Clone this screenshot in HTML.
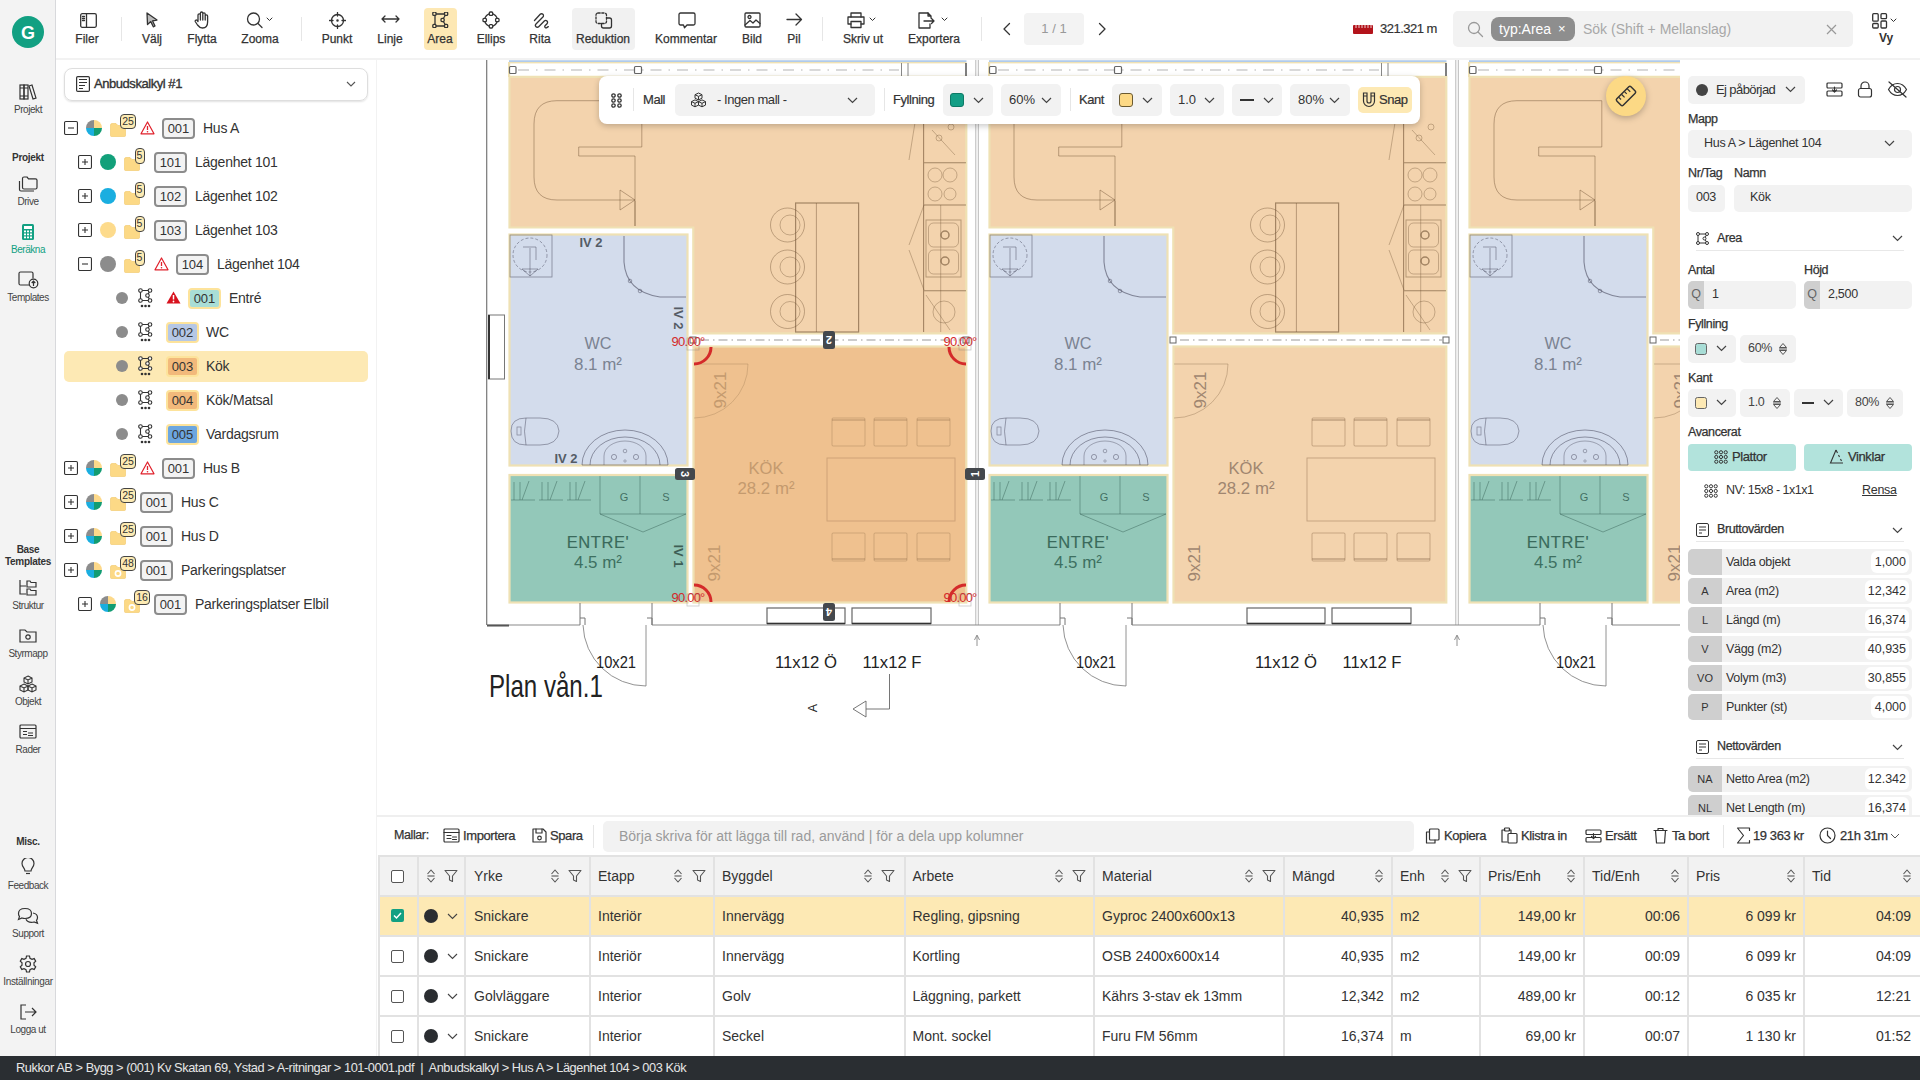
<!DOCTYPE html>
<html><head><meta charset="utf-8">
<style>
*{box-sizing:border-box;margin:0;padding:0}
html,body{width:1920px;height:1080px;overflow:hidden;background:#fff;font-family:"Liberation Sans",sans-serif;color:#333}
.abs{position:absolute}
#side{position:absolute;left:0;top:0;width:56px;height:1056px;background:#f3f3f3;border-right:1px solid #d8d9dc}
#top{position:absolute;left:56px;top:0;width:1864px;height:60px;background:#fff;border-bottom:2px solid #f2f2f2}
#left{position:absolute;left:56px;top:60px;width:322px;height:996px;background:#fff;border-right:2px solid #f2f2f2}
#canvas{position:absolute;left:377px;top:60px;width:1303px;height:755px;background:#fff;overflow:hidden}
#right{position:absolute;left:1680px;top:60px;width:240px;height:755px;background:#fff;overflow:hidden}
#bottom{position:absolute;left:377px;top:815px;width:1543px;height:241px;background:#fff;box-shadow:inset 0 2px 0 #efefef}
#status{position:absolute;left:0;top:1056px;width:1920px;height:24px;background:#2a2e32;color:#e6e6e6;font-size:12.8px;line-height:24px;padding-left:16px;white-space:nowrap;letter-spacing:-0.45px}
.sl{position:absolute;width:56px;text-align:center;font-size:10px;color:#444;letter-spacing:-0.45px}
.sh{position:absolute;width:56px;text-align:center;font-size:10px;font-weight:bold;color:#333;letter-spacing:-0.3px}
.tl{position:absolute;top:32px;font-size:12px;color:#333;text-align:center;white-space:nowrap;-webkit-text-stroke:0.25px #333}
.ti{position:absolute}
</style></head><body>
<div id="side">
<svg class="abs" style="left:12px;top:16px" width="32" height="32"><circle cx="16" cy="16" r="16" fill="#12a082"/><text x="16" y="22.5" text-anchor="middle" font-family="Liberation Sans" font-weight="bold" font-size="18" fill="#fff">G</text></svg>
<svg class="abs" style="left:19px;top:83px" width="18" height="17" fill="none" stroke="#333" stroke-width="1.2"><rect x="1" y="2" width="4" height="14"/><rect x="5" y="2" width="4" height="14"/><path d="M10 3 L13 2 L17 15 L14 16 Z"/><path d="M1 5h8M1 13h8"/></svg>
<div class="sl" style="left:0;top:104px">Projekt</div>
<div class="sh" style="left:0;top:152px">Projekt</div>
<svg class="abs" style="left:18px;top:176px" width="20" height="16" fill="none" stroke="#333" stroke-width="1.2" stroke-linejoin="round"><path d="M4.5 2.5 Q4.5 1 6 1 H9 L10.5 2.8 H17.5 Q19 2.8 19 4.3 V11.5 Q19 13 17.5 13 H6 Q4.5 13 4.5 11.5 Z"/><path d="M1.5 5 V13.5 Q1.5 15 3 15 H16"/></svg>
<div class="sl" style="left:0;top:196px">Drive</div>
<svg class="abs" style="left:22px;top:224px" width="12" height="16"><rect x="0" y="0" width="12" height="16" rx="1.5" fill="#12a082"/><rect x="2" y="2" width="8" height="3" fill="#fff"/><g fill="#fff"><rect x="2" y="6.5" width="2" height="1.8"/><rect x="5" y="6.5" width="2" height="1.8"/><rect x="8" y="6.5" width="2" height="1.8"/><rect x="2" y="9.5" width="2" height="1.8"/><rect x="5" y="9.5" width="2" height="1.8"/><rect x="8" y="9.5" width="2" height="1.8"/><rect x="2" y="12.5" width="2" height="1.8"/><rect x="5" y="12.5" width="2" height="1.8"/><rect x="8" y="12.5" width="2" height="1.8"/></g></svg>
<div class="sl" style="left:0;top:244px;color:#12a082">Beräkna</div>
<svg class="abs" style="left:18px;top:271px" width="21" height="18" fill="none" stroke="#333" stroke-width="1.2"><path d="M11 14 H2.5 Q1 14 1 12.5 V2.5 Q1 1 2.5 1 H13.5 Q15 1 15 2.5 V7.5"/><circle cx="15.5" cy="12.5" r="4.3"/><path d="M15.5 15 V10.3 M13.7 12 L15.5 10.2 L17.3 12"/></svg>
<div class="sl" style="left:0;top:292px">Templates</div>
<div class="sh" style="left:0;top:544px;line-height:12px">Base<br>Templates</div>
<svg class="abs" style="left:19px;top:579px" width="18" height="17" fill="none" stroke="#333" stroke-width="1.2"><path d="M1 1 V15 H7 M1 7 H7"/><path d="M8 2 H11 L12 3.5 H17 V8 H8 Z"/><path d="M8 10 H11 L12 11.5 H17 V16 H8 Z"/></svg>
<div class="sl" style="left:0;top:600px">Struktur</div>
<svg class="abs" style="left:19px;top:628px" width="18" height="15" fill="none" stroke="#333" stroke-width="1.2"><path d="M1 2 H6 L8 4 H17 V14 H1 Z"/><circle cx="9" cy="9" r="2.2"/></svg>
<div class="sl" style="left:0;top:648px">Styrmapp</div>
<svg class="abs" style="left:18px;top:675px" width="20" height="18" fill="none" stroke="#333" stroke-width="1.1"><path d="M10 1 L14 3 V7 L10 9 L6 7 V3 Z M6 3 L10 5 L14 3 M10 5 V9"/><path d="M6 9 L10 11 V15 L6 17 L2 15 V11 Z M2 11 L6 13 L10 11 M6 13 V17"/><path d="M14 9 L18 11 V15 L14 17 L10 15 V11 Z M10 11 L14 13 L18 11 M14 13 V17"/></svg>
<div class="sl" style="left:0;top:696px">Objekt</div>
<svg class="abs" style="left:19px;top:724px" width="18" height="15" fill="none" stroke="#333" stroke-width="1.2"><rect x="1" y="1" width="16" height="13" rx="1"/><path d="M1 4.5 H17 M4 7.5 H8 M4 10.5 H8 M9 9 H14 M9 11.5 H14"/></svg>
<div class="sl" style="left:0;top:744px">Rader</div>
<div class="sh" style="left:0;top:836px">Misc.</div>
<svg class="abs" style="left:21px;top:858px" width="14" height="18" fill="none" stroke="#333" stroke-width="1.2"><path d="M4 13 C4 10 1 9 1 5.5 A6 6 0 0 1 13 5.5 C13 9 10 10 10 13 Z"/><path d="M5 15.5 H9"/></svg>
<div class="sl" style="left:0;top:880px">Feedback</div>
<svg class="abs" style="left:17px;top:907px" width="22" height="18" fill="none" stroke="#333" stroke-width="1.2"><path d="M8 1.5 C12 1.5 14.5 3.5 14.5 6.5 C14.5 9.5 12 11.5 8 11.5 C7 11.5 6 11.3 5 11 L1.5 12.5 L2.5 9.5 C1.8 8.7 1.5 7.6 1.5 6.5 C1.5 3.5 4 1.5 8 1.5 Z"/><path d="M16 6 C19 6.5 20.5 8.2 20.5 10.5 C20.5 11.6 20.2 12.5 19.5 13.3 L20.5 16.3 L17 15 C16.2 15.3 15.4 15.4 14.5 15.4 C11.8 15.4 9.8 14.2 9 12.3"/></svg>
<div class="sl" style="left:0;top:928px">Support</div>
<svg class="abs" style="left:19px;top:955px" width="18" height="18" fill="none" stroke="#333" stroke-width="1.2"><circle cx="9" cy="9" r="2.5"/><path d="M7.5 1 H10.5 L11 3.3 L13 4.4 L15.2 3.6 L16.7 6.2 L15 7.8 V10.2 L16.7 11.8 L15.2 14.4 L13 13.6 L11 14.7 L10.5 17 H7.5 L7 14.7 L5 13.6 L2.8 14.4 L1.3 11.8 L3 10.2 V7.8 L1.3 6.2 L2.8 3.6 L5 4.4 L7 3.3 Z"/></svg>
<div class="sl" style="left:-2px;width:60px;top:976px;font-size:10px;letter-spacing:-0.35px">Inställningar</div>
<svg class="abs" style="left:19px;top:1004px" width="18" height="16" fill="none" stroke="#333" stroke-width="1.2"><path d="M7 1 H2 V15 H7"/><path d="M6 8 H17 M13 4 L17 8 L13 12"/></svg>
<div class="sl" style="left:0;top:1024px">Logga ut</div>
</div>
<div id="top"><svg class="ti" style="left:24px;top:13px" width="17" height="15" fill="none" stroke="#333" stroke-width="1.3" stroke-linecap="round" stroke-linejoin="round"><rect x="0.7" y="0.7" width="15.6" height="13.6" rx="1.5"/><path d="M6.5 0.7 V14.3 M2.5 3.5 H4.5 M2.5 5.5 H4.5 M2.5 7.5 H4.5"/></svg>
<div class="tl" style="left:-19px;width:100px;">Filer</div>
<div class="abs" style="left:65px;top:17px;width:1px;height:24px;background:#e6e6e6"></div>
<svg class="ti" style="left:90px;top:12px" width="13" height="16" fill="none" stroke="#333" stroke-width="1.3" stroke-linecap="round" stroke-linejoin="round"><path d="M1 1 L11 8 L6.5 8.8 L9 14 L7.3 14.8 L4.8 9.6 L1.5 12.5 Z" fill="#bbb" stroke="#333"/></svg>
<div class="tl" style="left:46px;width:100px;">Välj</div>
<svg class="ti" style="left:138px;top:11px" width="17" height="18" fill="none" stroke="#333" stroke-width="1.3" stroke-linecap="round" stroke-linejoin="round"><path d="M4 10 V4 A1.2 1.2 0 0 1 6.4 4 V9 M6.4 9 V2.2 A1.2 1.2 0 0 1 8.8 2.2 V9 M8.8 9 V3 A1.2 1.2 0 0 1 11.2 3 V9 M11.2 9 V5 A1.2 1.2 0 0 1 13.6 5 V11 C13.6 15 11.5 17 8.5 17 C6 17 5 16 3.5 14 L1.2 10.5 A1.2 1.2 0 0 1 3 9.2 L4 10.5"/></svg>
<div class="tl" style="left:96px;width:100px;">Flytta</div>
<svg class="ti" style="left:190px;top:12px" width="32" height="17" fill="none" stroke="#333" stroke-width="1.3" stroke-linecap="round" stroke-linejoin="round"><circle cx="7.5" cy="7" r="6"/><path d="M12 11.5 L16 15.5"/><path d="M21 6 L23.5 8.5 L26 6" stroke-width="1"/></svg>
<div class="tl" style="left:154px;width:100px;">Zooma</div>
<div class="abs" style="left:245px;top:17px;width:1px;height:24px;background:#e6e6e6"></div>
<svg class="ti" style="left:273px;top:12px" width="17" height="17" fill="none" stroke="#333" stroke-width="1.3" stroke-linecap="round" stroke-linejoin="round"><circle cx="8.5" cy="8.5" r="6"/><path d="M8.5 0.5 V4 M8.5 13 V16.5 M0.5 8.5 H4 M13 8.5 H16.5"/><circle cx="8.5" cy="8.5" r="0.6" fill="#333"/></svg>
<div class="tl" style="left:231px;width:100px;">Punkt</div>
<svg class="ti" style="left:325px;top:14px" width="19" height="10" fill="none" stroke="#333" stroke-width="1.3" stroke-linecap="round" stroke-linejoin="round"><path d="M1 5 H18 M4 2 L1 5 L4 8 M15 2 L18 5 L15 8"/></svg>
<div class="tl" style="left:284px;width:100px;">Linje</div>
<div class="abs" style="left:368px;top:8px;width:33px;height:42px;background:#fde8b4;border-radius:4px"></div>
<svg class="ti" style="left:376px;top:12px" width="17" height="16" fill="none" stroke="#333" stroke-width="1.3" stroke-linecap="round" stroke-linejoin="round"><path d="M3 2 H14 L10.5 8 L14 14 H3 Z" /><rect x="0.8" y="0.2" width="3.2" height="3.2" rx="1" fill="#fde8b4"/><rect x="12.5" y="0.2" width="3.2" height="3.2" rx="1" fill="#fde8b4"/><rect x="0.8" y="12.4" width="3.2" height="3.2" rx="1" fill="#fde8b4"/><rect x="12.5" y="12.4" width="3.2" height="3.2" rx="1" fill="#fde8b4"/><rect x="9" y="6.4" width="3.2" height="3.2" rx="1" fill="#fde8b4"/></svg>
<div class="tl" style="left:334px;width:100px;">Area</div>
<svg class="ti" style="left:426px;top:11px" width="18" height="18" fill="none" stroke="#333" stroke-width="1.3" stroke-linecap="round" stroke-linejoin="round"><circle cx="9" cy="9" r="6.3"/><rect x="7.3" y="1" width="3.4" height="3.4" rx="1" fill="#fff"/><rect x="7.3" y="13.6" width="3.4" height="3.4" rx="1" fill="#fff"/><rect x="1" y="7.3" width="3.4" height="3.4" rx="1" fill="#fff"/><rect x="13.6" y="7.3" width="3.4" height="3.4" rx="1" fill="#fff"/></svg>
<div class="tl" style="left:385px;width:100px;">Ellips</div>
<svg class="ti" style="left:477px;top:12px" width="17" height="17" fill="none" stroke="#333" stroke-width="1.3" stroke-linecap="round" stroke-linejoin="round"><path d="M1.5 8.5 L7.2 2.3 A1.9 1.9 0 0 1 9.9 5 L3 12 A1.9 1.9 0 0 0 5.7 14.7 L11.3 9 A1.9 1.9 0 0 1 14 11.7 L12 13.8 A1.3 1.3 0 0 0 13.8 15.6 L15.3 14.6"/></svg>
<div class="tl" style="left:434px;width:100px;">Rita</div>
<div class="abs" style="left:516px;top:8px;width:63px;height:42px;background:#f1f1f1;border-radius:4px"></div>
<svg class="ti" style="left:539px;top:12px" width="18" height="17" fill="none" stroke="#333" stroke-width="1.3" stroke-linecap="round" stroke-linejoin="round"><rect x="1" y="1" width="10.5" height="10.5" rx="2" stroke-dasharray="2.2 1.6"/><path d="M11.5 6 H14.5 A2 2 0 0 1 16.5 8 V14 A2 2 0 0 1 14.5 16 H8.5 A2 2 0 0 1 6.5 14 V11.5"/></svg>
<div class="tl" style="left:497px;width:100px;">Reduktion</div>
<svg class="ti" style="left:622px;top:12px" width="18" height="17" fill="none" stroke="#333" stroke-width="1.3" stroke-linecap="round" stroke-linejoin="round"><path d="M2.5 1 H15.5 A1.5 1.5 0 0 1 17 2.5 V11.5 A1.5 1.5 0 0 1 15.5 13 H9 L6.5 15.8 L5.5 13 H2.5 A1.5 1.5 0 0 1 1 11.5 V2.5 A1.5 1.5 0 0 1 2.5 1 Z"/></svg>
<div class="tl" style="left:580px;width:100px;">Kommentar</div>
<svg class="ti" style="left:688px;top:12px" width="17" height="16" fill="none" stroke="#333" stroke-width="1.3" stroke-linecap="round" stroke-linejoin="round"><rect x="1" y="1" width="15" height="14" rx="1"/><circle cx="5.5" cy="5" r="1.5"/><path d="M1 13 L6 8.5 L9 11 L12 8 L16 11.5"/></svg>
<div class="tl" style="left:646px;width:100px;">Bild</div>
<svg class="ti" style="left:730px;top:13px" width="17" height="13" fill="none" stroke="#333" stroke-width="1.3" stroke-linecap="round" stroke-linejoin="round"><path d="M1 6.5 H15.5 M10 1 L15.5 6.5 L10 12"/></svg>
<div class="tl" style="left:688px;width:100px;">Pil</div>
<div class="abs" style="left:766px;top:17px;width:1px;height:24px;background:#e6e6e6"></div>
<svg class="ti" style="left:791px;top:12px" width="32" height="17" fill="none" stroke="#333" stroke-width="1.3" stroke-linecap="round" stroke-linejoin="round"><path d="M4 5 V1 H14 V5"/><path d="M4 12 H1 V5 H17 V12 H14"/><rect x="4" y="9.5" width="10" height="6"/><path d="M23 6 L25.5 8.5 L28 6" stroke-width="1"/></svg>
<div class="tl" style="left:757px;width:100px;">Skriv ut</div>
<svg class="ti" style="left:861px;top:12px" width="34" height="17" fill="none" stroke="#333" stroke-width="1.3" stroke-linecap="round" stroke-linejoin="round"><path d="M11 1 H2 V16 H13 V12"/><path d="M11 1 L14 4 M11 1 V4 H14 V6"/><path d="M7 9 H17 M14.5 6.5 L17 9 L14.5 11.5"/><path d="M25 6 L27.5 8.5 L30 6" stroke-width="1"/></svg>
<div class="tl" style="left:828px;width:100px;">Exportera</div>
<div class="abs" style="left:925px;top:17px;width:1px;height:24px;background:#e6e6e6"></div>
<svg class="ti" style="left:946px;top:22px" width="10" height="14" fill="none" stroke="#333" stroke-width="1.3" stroke-linecap="round" stroke-linejoin="round"><path d="M7.5 1.5 L2 7 L7.5 12.5"/></svg>
<div class="abs" style="left:968px;top:13px;width:60px;height:32px;background:#f3f3f3;border-radius:4px;color:#999;font-size:13px;line-height:32px;text-align:center">1 / 1</div>
<svg class="ti" style="left:1041px;top:22px" width="10" height="14" fill="none" stroke="#333" stroke-width="1.3" stroke-linecap="round" stroke-linejoin="round"><path d="M2.5 1.5 L8 7 L2.5 12.5"/></svg>
<svg class="ti" style="left:1297px;top:25px" width="20" height="10"><rect x="0" y="0" width="20" height="9" rx="1" fill="#b3131b"/><path d="M3 0 V3 M6 0 V3 M9 0 V3 M12 0 V3 M15 0 V3 M18 0 V3" stroke="#fff" stroke-width="0.8"/></svg>
<div class="abs" style="left:1324px;top:21px;font-size:13px;color:#333;white-space:nowrap;-webkit-text-stroke:0.2px #333;letter-spacing:-0.5px">321.321 m</div>
<div class="abs" style="left:1397px;top:11px;width:400px;height:36px;background:#f2f2f2;border-radius:5px"></div>
<svg class="ti" style="left:1411px;top:21px" width="17" height="17" fill="none" stroke="#999" stroke-width="1.3" stroke-linecap="round"><circle cx="7" cy="7" r="5.5"/><path d="M11 11 L15.5 15.5"/></svg>
<div class="abs" style="left:1435px;top:17px;width:84px;height:24px;background:#8e8e8e;border-radius:8px;color:#fff;font-size:14px;line-height:24px;padding-left:8px;white-space:nowrap">typ:Area<span style="position:absolute;left:67px;top:0;font-size:13px">×</span></div>
<div class="abs" style="left:1527px;top:21px;font-size:14px;color:#a8a8a8;white-space:nowrap">Sök (Shift + Mellanslag)</div>
<svg class="ti" style="left:1770px;top:24px" width="11" height="11" fill="none" stroke="#999" stroke-width="1.2"><path d="M1 1 L10 10 M10 1 L1 10"/></svg>
<svg class="ti" style="left:1816px;top:13px" width="28" height="16" fill="none" stroke="#333" stroke-width="1.3" stroke-linecap="round" stroke-linejoin="round"><rect x="0.7" y="0.7" width="5.5" height="7.5" rx="1"/><rect x="9" y="0.7" width="5.5" height="5" rx="1"/><rect x="0.7" y="10.5" width="5.5" height="4.5" rx="1"/><rect x="9" y="8" width="5.5" height="7" rx="1"/><path d="M19 6 L21.5 8.5 L24 6" stroke-width="1"/></svg>
<div class="abs" style="left:1810px;top:31px;width:40px;text-align:center;font-size:12px;font-weight:bold;color:#333">Vy</div></div>
<div id="left"><div class="abs" style="left:8px;top:8px;width:304px;height:33px;border:1px solid #dedede;border-radius:8px;box-shadow:0 1px 2px rgba(0,0,0,0.12)"></div>
<svg class="abs" style="left:20px;top:16px" width="14" height="16" fill="none" stroke="#333" stroke-width="1.2"><rect x="0.6" y="0.6" width="12.8" height="14.8" rx="1.2"/><path d="M3 3.5 H11 M3 6.5 H11 M3 9.5 H9 M3 12.5 H7"/></svg>
<div class="abs" style="left:38px;top:16px;font-size:13px;color:#333;white-space:nowrap;-webkit-text-stroke:0.35px #333;letter-spacing:-0.45px">Anbudskalkyl #1</div>
<svg class="abs" style="left:290px;top:21px" width="10" height="6" fill="none" stroke="#555" stroke-width="1.1"><path d="M1 1 L5 5 L9 1"/></svg>
<div class="abs" style="left:8px;top:291px;width:304px;height:31px;background:#fde9b4;border-radius:5px"></div>
<svg class="abs" style="left:8px;top:61px" width="14" height="14" fill="none" stroke="#333" stroke-width="1.1"><rect x="0.55" y="0.55" width="12.9" height="12.9" rx="1.2"/><path d="M4 7 H10"/></svg>
<svg class="abs" style="left:30px;top:60px" width="16" height="16"><path d="M8 8 V0 A8 8 0 0 0 0 8 Z" fill="#8c8c8c"/><path d="M8 8 H16 A8 8 0 0 0 8 0 Z" fill="#fdd98a"/><path d="M8 8 H0 A8 8 0 0 0 8 16 Z" fill="#1aaee0"/><path d="M8 8 V16 A8 8 0 0 0 16 8 Z" fill="#129c72"/></svg>
<svg class="abs" style="left:54px;top:63px" width="16" height="14"><path d="M0.5 2 Q0.5 0.5 2 0.5 H6 L8 2.5 H14 Q15.5 2.5 15.5 4 V12.5 Q15.5 13.5 14.5 13.5 H1.5 Q0.5 13.5 0.5 12.5 Z" fill="#fcd986" stroke="#f2c866" stroke-width="0.6"/></svg><div class="abs" style="left:64px;top:54px;width:16px;height:15px;background:#fdebb3;border:1px solid #444;border-radius:4px;font-size:10.5px;line-height:13px;text-align:center;color:#333">25</div>
<svg class="abs" style="left:84px;top:61px" width="15" height="14"><path d="M7.5 1 L14 12.8 H1 Z" fill="none" stroke="#e0202b" stroke-width="1.2" stroke-linejoin="round"/><path d="M7.5 5 V9" stroke="#e0202b" stroke-width="1.3"/><circle cx="7.5" cy="10.8" r="0.8" fill="#e0202b"/></svg>
<div class="abs" style="left:106px;top:58px;width:33px;height:21px;background:#f3f3f3;border:2px solid #8c8c8c;border-radius:4px;font-size:13px;line-height:17px;text-align:center;color:#333">001</div>
<div class="abs" style="left:147px;top:59px;font-size:14px;line-height:18px;color:#333;white-space:nowrap;letter-spacing:-0.25px">Hus A</div>
<svg class="abs" style="left:22px;top:95px" width="14" height="14" fill="none" stroke="#333" stroke-width="1.1"><rect x="0.55" y="0.55" width="12.9" height="12.9" rx="1.2"/><path d="M4 7 H10 M7 4 V10"/></svg>
<svg class="abs" style="left:44px;top:94px" width="16" height="16"><circle cx="8" cy="8" r="8" fill="#12a07a"/></svg>
<svg class="abs" style="left:68px;top:97px" width="16" height="14"><path d="M0.5 2 Q0.5 0.5 2 0.5 H6 L8 2.5 H14 Q15.5 2.5 15.5 4 V12.5 Q15.5 13.5 14.5 13.5 H1.5 Q0.5 13.5 0.5 12.5 Z" fill="#fcd986" stroke="#f2c866" stroke-width="0.6"/></svg><div class="abs" style="left:78.5px;top:88px;width:10px;height:16px;background:#fdebb3;border:1px solid #444;border-radius:4px;font-size:10.5px;line-height:13px;text-align:center;color:#333">5</div>
<div class="abs" style="left:98px;top:92px;width:33px;height:21px;background:#f3f3f3;border:2px solid #8c8c8c;border-radius:4px;font-size:13px;line-height:17px;text-align:center;color:#333">101</div>
<div class="abs" style="left:139px;top:93px;font-size:14px;line-height:18px;color:#333;white-space:nowrap;letter-spacing:-0.25px">Lägenhet 101</div>
<svg class="abs" style="left:22px;top:129px" width="14" height="14" fill="none" stroke="#333" stroke-width="1.1"><rect x="0.55" y="0.55" width="12.9" height="12.9" rx="1.2"/><path d="M4 7 H10 M7 4 V10"/></svg>
<svg class="abs" style="left:44px;top:128px" width="16" height="16"><circle cx="8" cy="8" r="8" fill="#1aaee0"/></svg>
<svg class="abs" style="left:68px;top:131px" width="16" height="14"><path d="M0.5 2 Q0.5 0.5 2 0.5 H6 L8 2.5 H14 Q15.5 2.5 15.5 4 V12.5 Q15.5 13.5 14.5 13.5 H1.5 Q0.5 13.5 0.5 12.5 Z" fill="#fcd986" stroke="#f2c866" stroke-width="0.6"/></svg><div class="abs" style="left:78.5px;top:122px;width:10px;height:16px;background:#fdebb3;border:1px solid #444;border-radius:4px;font-size:10.5px;line-height:13px;text-align:center;color:#333">5</div>
<div class="abs" style="left:98px;top:126px;width:33px;height:21px;background:#f3f3f3;border:2px solid #8c8c8c;border-radius:4px;font-size:13px;line-height:17px;text-align:center;color:#333">102</div>
<div class="abs" style="left:139px;top:127px;font-size:14px;line-height:18px;color:#333;white-space:nowrap;letter-spacing:-0.25px">Lägenhet 102</div>
<svg class="abs" style="left:22px;top:163px" width="14" height="14" fill="none" stroke="#333" stroke-width="1.1"><rect x="0.55" y="0.55" width="12.9" height="12.9" rx="1.2"/><path d="M4 7 H10 M7 4 V10"/></svg>
<svg class="abs" style="left:44px;top:162px" width="16" height="16"><circle cx="8" cy="8" r="8" fill="#fddb8c"/></svg>
<svg class="abs" style="left:68px;top:165px" width="16" height="14"><path d="M0.5 2 Q0.5 0.5 2 0.5 H6 L8 2.5 H14 Q15.5 2.5 15.5 4 V12.5 Q15.5 13.5 14.5 13.5 H1.5 Q0.5 13.5 0.5 12.5 Z" fill="#fcd986" stroke="#f2c866" stroke-width="0.6"/></svg><div class="abs" style="left:78.5px;top:156px;width:10px;height:16px;background:#fdebb3;border:1px solid #444;border-radius:4px;font-size:10.5px;line-height:13px;text-align:center;color:#333">5</div>
<div class="abs" style="left:98px;top:160px;width:33px;height:21px;background:#f3f3f3;border:2px solid #8c8c8c;border-radius:4px;font-size:13px;line-height:17px;text-align:center;color:#333">103</div>
<div class="abs" style="left:139px;top:161px;font-size:14px;line-height:18px;color:#333;white-space:nowrap;letter-spacing:-0.25px">Lägenhet 103</div>
<svg class="abs" style="left:22px;top:197px" width="14" height="14" fill="none" stroke="#333" stroke-width="1.1"><rect x="0.55" y="0.55" width="12.9" height="12.9" rx="1.2"/><path d="M4 7 H10"/></svg>
<svg class="abs" style="left:44px;top:196px" width="16" height="16"><circle cx="8" cy="8" r="8" fill="#8c8c8c"/></svg>
<svg class="abs" style="left:68px;top:199px" width="16" height="14"><path d="M0.5 2 Q0.5 0.5 2 0.5 H6 L8 2.5 H14 Q15.5 2.5 15.5 4 V12.5 Q15.5 13.5 14.5 13.5 H1.5 Q0.5 13.5 0.5 12.5 Z" fill="#fcd986" stroke="#f2c866" stroke-width="0.6"/></svg><div class="abs" style="left:78.5px;top:190px;width:10px;height:16px;background:#fdebb3;border:1px solid #444;border-radius:4px;font-size:10.5px;line-height:13px;text-align:center;color:#333">5</div>
<svg class="abs" style="left:98px;top:197px" width="15" height="14"><path d="M7.5 1 L14 12.8 H1 Z" fill="none" stroke="#e0202b" stroke-width="1.2" stroke-linejoin="round"/><path d="M7.5 5 V9" stroke="#e0202b" stroke-width="1.3"/><circle cx="7.5" cy="10.8" r="0.8" fill="#e0202b"/></svg>
<div class="abs" style="left:120px;top:194px;width:33px;height:21px;background:#f3f3f3;border:2px solid #8c8c8c;border-radius:4px;font-size:13px;line-height:17px;text-align:center;color:#333">104</div>
<div class="abs" style="left:161px;top:195px;font-size:14px;line-height:18px;color:#333;white-space:nowrap;letter-spacing:-0.25px">Lägenhet 104</div>
<svg class="abs" style="left:60px;top:232px" width="12" height="12"><circle cx="6" cy="6" r="6" fill="#8c8c8c"/></svg>
<svg class="abs" style="left:82px;top:228px" width="15" height="20" fill="none" stroke="#333" stroke-width="1.1"><path d="M2.5 2.5 H12 L9.5 7.5 L12 12.5 H2.5 Z"/><circle cx="2.5" cy="2.5" r="1.8" fill="#fff"/><circle cx="12" cy="2.5" r="1.8" fill="#fff"/><circle cx="9.5" cy="7.5" r="1.8" fill="#fff"/><circle cx="2.5" cy="12.5" r="1.8" fill="#fff"/><circle cx="12" cy="12.5" r="1.8" fill="#fff"/><g fill="#333" stroke="none"><circle cx="4" cy="18" r="1.3"/><circle cx="7.5" cy="18" r="1.3"/><circle cx="11" cy="18" r="1.3"/></g></svg>
<svg class="abs" style="left:110px;top:231px" width="15" height="13"><path d="M7.5 0.5 L14.5 12.5 H0.5 Z" fill="#d8121e"/><path d="M7.5 4 V8.5" stroke="#fff" stroke-width="1.5"/><circle cx="7.5" cy="10.5" r="0.9" fill="#fff"/></svg>
<div class="abs" style="left:132px;top:228px;width:33px;height:21px;background:#a9ded6;border:2px solid #fde39b;border-radius:4px;font-size:13px;line-height:17px;text-align:center;color:#333">001</div>
<div class="abs" style="left:173px;top:229px;font-size:14px;line-height:18px;color:#333;white-space:nowrap;letter-spacing:-0.25px">Entré</div>
<svg class="abs" style="left:60px;top:266px" width="12" height="12"><circle cx="6" cy="6" r="6" fill="#8c8c8c"/></svg>
<svg class="abs" style="left:82px;top:262px" width="15" height="20" fill="none" stroke="#333" stroke-width="1.1"><path d="M2.5 2.5 H12 L9.5 7.5 L12 12.5 H2.5 Z"/><circle cx="2.5" cy="2.5" r="1.8" fill="#fff"/><circle cx="12" cy="2.5" r="1.8" fill="#fff"/><circle cx="9.5" cy="7.5" r="1.8" fill="#fff"/><circle cx="2.5" cy="12.5" r="1.8" fill="#fff"/><circle cx="12" cy="12.5" r="1.8" fill="#fff"/><g fill="#333" stroke="none"><circle cx="4" cy="18" r="1.3"/><circle cx="7.5" cy="18" r="1.3"/><circle cx="11" cy="18" r="1.3"/></g></svg>
<div class="abs" style="left:110px;top:262px;width:33px;height:21px;background:#b5c7e5;border:2px solid #fde39b;border-radius:4px;font-size:13px;line-height:17px;text-align:center;color:#333">002</div>
<div class="abs" style="left:150px;top:263px;font-size:14px;line-height:18px;color:#333;white-space:nowrap;letter-spacing:-0.25px">WC</div>
<svg class="abs" style="left:60px;top:300px" width="12" height="12"><circle cx="6" cy="6" r="6" fill="#8c8c8c"/></svg>
<svg class="abs" style="left:82px;top:296px" width="15" height="20" fill="none" stroke="#333" stroke-width="1.1"><path d="M2.5 2.5 H12 L9.5 7.5 L12 12.5 H2.5 Z"/><circle cx="2.5" cy="2.5" r="1.8" fill="#fff"/><circle cx="12" cy="2.5" r="1.8" fill="#fff"/><circle cx="9.5" cy="7.5" r="1.8" fill="#fff"/><circle cx="2.5" cy="12.5" r="1.8" fill="#fff"/><circle cx="12" cy="12.5" r="1.8" fill="#fff"/><g fill="#333" stroke="none"><circle cx="4" cy="18" r="1.3"/><circle cx="7.5" cy="18" r="1.3"/><circle cx="11" cy="18" r="1.3"/></g></svg>
<div class="abs" style="left:110px;top:296px;width:33px;height:21px;background:#f2b97b;border:2px solid #fde39b;border-radius:4px;font-size:13px;line-height:17px;text-align:center;color:#333">003</div>
<div class="abs" style="left:150px;top:297px;font-size:14px;line-height:18px;color:#333;white-space:nowrap;letter-spacing:-0.25px">Kök</div>
<svg class="abs" style="left:60px;top:334px" width="12" height="12"><circle cx="6" cy="6" r="6" fill="#8c8c8c"/></svg>
<svg class="abs" style="left:82px;top:330px" width="15" height="20" fill="none" stroke="#333" stroke-width="1.1"><path d="M2.5 2.5 H12 L9.5 7.5 L12 12.5 H2.5 Z"/><circle cx="2.5" cy="2.5" r="1.8" fill="#fff"/><circle cx="12" cy="2.5" r="1.8" fill="#fff"/><circle cx="9.5" cy="7.5" r="1.8" fill="#fff"/><circle cx="2.5" cy="12.5" r="1.8" fill="#fff"/><circle cx="12" cy="12.5" r="1.8" fill="#fff"/><g fill="#333" stroke="none"><circle cx="4" cy="18" r="1.3"/><circle cx="7.5" cy="18" r="1.3"/><circle cx="11" cy="18" r="1.3"/></g></svg>
<div class="abs" style="left:110px;top:330px;width:33px;height:21px;background:#f2b97b;border:2px solid #fde39b;border-radius:4px;font-size:13px;line-height:17px;text-align:center;color:#333">004</div>
<div class="abs" style="left:150px;top:331px;font-size:14px;line-height:18px;color:#333;white-space:nowrap;letter-spacing:-0.25px">Kök/Matsal</div>
<svg class="abs" style="left:60px;top:368px" width="12" height="12"><circle cx="6" cy="6" r="6" fill="#8c8c8c"/></svg>
<svg class="abs" style="left:82px;top:364px" width="15" height="20" fill="none" stroke="#333" stroke-width="1.1"><path d="M2.5 2.5 H12 L9.5 7.5 L12 12.5 H2.5 Z"/><circle cx="2.5" cy="2.5" r="1.8" fill="#fff"/><circle cx="12" cy="2.5" r="1.8" fill="#fff"/><circle cx="9.5" cy="7.5" r="1.8" fill="#fff"/><circle cx="2.5" cy="12.5" r="1.8" fill="#fff"/><circle cx="12" cy="12.5" r="1.8" fill="#fff"/><g fill="#333" stroke="none"><circle cx="4" cy="18" r="1.3"/><circle cx="7.5" cy="18" r="1.3"/><circle cx="11" cy="18" r="1.3"/></g></svg>
<div class="abs" style="left:110px;top:364px;width:33px;height:21px;background:#6ca6df;border:2px solid #fde39b;border-radius:4px;font-size:13px;line-height:17px;text-align:center;color:#333">005</div>
<div class="abs" style="left:150px;top:365px;font-size:14px;line-height:18px;color:#333;white-space:nowrap;letter-spacing:-0.25px">Vardagsrum</div>
<svg class="abs" style="left:8px;top:401px" width="14" height="14" fill="none" stroke="#333" stroke-width="1.1"><rect x="0.55" y="0.55" width="12.9" height="12.9" rx="1.2"/><path d="M4 7 H10 M7 4 V10"/></svg>
<svg class="abs" style="left:30px;top:400px" width="16" height="16"><path d="M8 8 V0 A8 8 0 0 0 0 8 Z" fill="#8c8c8c"/><path d="M8 8 H16 A8 8 0 0 0 8 0 Z" fill="#fdd98a"/><path d="M8 8 H0 A8 8 0 0 0 8 16 Z" fill="#1aaee0"/><path d="M8 8 V16 A8 8 0 0 0 16 8 Z" fill="#129c72"/></svg>
<svg class="abs" style="left:54px;top:403px" width="16" height="14"><path d="M0.5 2 Q0.5 0.5 2 0.5 H6 L8 2.5 H14 Q15.5 2.5 15.5 4 V12.5 Q15.5 13.5 14.5 13.5 H1.5 Q0.5 13.5 0.5 12.5 Z" fill="#fcd986" stroke="#f2c866" stroke-width="0.6"/></svg><div class="abs" style="left:64px;top:394px;width:16px;height:15px;background:#fdebb3;border:1px solid #444;border-radius:4px;font-size:10.5px;line-height:13px;text-align:center;color:#333">25</div>
<svg class="abs" style="left:84px;top:401px" width="15" height="14"><path d="M7.5 1 L14 12.8 H1 Z" fill="none" stroke="#e0202b" stroke-width="1.2" stroke-linejoin="round"/><path d="M7.5 5 V9" stroke="#e0202b" stroke-width="1.3"/><circle cx="7.5" cy="10.8" r="0.8" fill="#e0202b"/></svg>
<div class="abs" style="left:106px;top:398px;width:33px;height:21px;background:#f3f3f3;border:2px solid #8c8c8c;border-radius:4px;font-size:13px;line-height:17px;text-align:center;color:#333">001</div>
<div class="abs" style="left:147px;top:399px;font-size:14px;line-height:18px;color:#333;white-space:nowrap;letter-spacing:-0.25px">Hus B</div>
<svg class="abs" style="left:8px;top:435px" width="14" height="14" fill="none" stroke="#333" stroke-width="1.1"><rect x="0.55" y="0.55" width="12.9" height="12.9" rx="1.2"/><path d="M4 7 H10 M7 4 V10"/></svg>
<svg class="abs" style="left:30px;top:434px" width="16" height="16"><path d="M8 8 V0 A8 8 0 0 0 0 8 Z" fill="#8c8c8c"/><path d="M8 8 H16 A8 8 0 0 0 8 0 Z" fill="#fdd98a"/><path d="M8 8 H0 A8 8 0 0 0 8 16 Z" fill="#1aaee0"/><path d="M8 8 V16 A8 8 0 0 0 16 8 Z" fill="#129c72"/></svg>
<svg class="abs" style="left:54px;top:437px" width="16" height="14"><path d="M0.5 2 Q0.5 0.5 2 0.5 H6 L8 2.5 H14 Q15.5 2.5 15.5 4 V12.5 Q15.5 13.5 14.5 13.5 H1.5 Q0.5 13.5 0.5 12.5 Z" fill="#fcd986" stroke="#f2c866" stroke-width="0.6"/></svg><div class="abs" style="left:64px;top:428px;width:16px;height:15px;background:#fdebb3;border:1px solid #444;border-radius:4px;font-size:10.5px;line-height:13px;text-align:center;color:#333">25</div>
<div class="abs" style="left:84px;top:432px;width:33px;height:21px;background:#f3f3f3;border:2px solid #8c8c8c;border-radius:4px;font-size:13px;line-height:17px;text-align:center;color:#333">001</div>
<div class="abs" style="left:125px;top:433px;font-size:14px;line-height:18px;color:#333;white-space:nowrap;letter-spacing:-0.25px">Hus C</div>
<svg class="abs" style="left:8px;top:469px" width="14" height="14" fill="none" stroke="#333" stroke-width="1.1"><rect x="0.55" y="0.55" width="12.9" height="12.9" rx="1.2"/><path d="M4 7 H10 M7 4 V10"/></svg>
<svg class="abs" style="left:30px;top:468px" width="16" height="16"><path d="M8 8 V0 A8 8 0 0 0 0 8 Z" fill="#8c8c8c"/><path d="M8 8 H16 A8 8 0 0 0 8 0 Z" fill="#fdd98a"/><path d="M8 8 H0 A8 8 0 0 0 8 16 Z" fill="#1aaee0"/><path d="M8 8 V16 A8 8 0 0 0 16 8 Z" fill="#129c72"/></svg>
<svg class="abs" style="left:54px;top:471px" width="16" height="14"><path d="M0.5 2 Q0.5 0.5 2 0.5 H6 L8 2.5 H14 Q15.5 2.5 15.5 4 V12.5 Q15.5 13.5 14.5 13.5 H1.5 Q0.5 13.5 0.5 12.5 Z" fill="#fcd986" stroke="#f2c866" stroke-width="0.6"/></svg><div class="abs" style="left:64px;top:462px;width:16px;height:15px;background:#fdebb3;border:1px solid #444;border-radius:4px;font-size:10.5px;line-height:13px;text-align:center;color:#333">25</div>
<div class="abs" style="left:84px;top:466px;width:33px;height:21px;background:#f3f3f3;border:2px solid #8c8c8c;border-radius:4px;font-size:13px;line-height:17px;text-align:center;color:#333">001</div>
<div class="abs" style="left:125px;top:467px;font-size:14px;line-height:18px;color:#333;white-space:nowrap;letter-spacing:-0.25px">Hus D</div>
<svg class="abs" style="left:8px;top:503px" width="14" height="14" fill="none" stroke="#333" stroke-width="1.1"><rect x="0.55" y="0.55" width="12.9" height="12.9" rx="1.2"/><path d="M4 7 H10 M7 4 V10"/></svg>
<svg class="abs" style="left:30px;top:502px" width="16" height="16"><path d="M8 8 V0 A8 8 0 0 0 0 8 Z" fill="#8c8c8c"/><path d="M8 8 H16 A8 8 0 0 0 8 0 Z" fill="#fdd98a"/><path d="M8 8 H0 A8 8 0 0 0 8 16 Z" fill="#1aaee0"/><path d="M8 8 V16 A8 8 0 0 0 16 8 Z" fill="#129c72"/></svg>
<svg class="abs" style="left:54px;top:505px" width="16" height="14"><path d="M0.5 2 Q0.5 0.5 2 0.5 H6 L8 2.5 H14 Q15.5 2.5 15.5 4 V12.5 Q15.5 13.5 14.5 13.5 H1.5 Q0.5 13.5 0.5 12.5 Z" fill="#fcd986" stroke="#f2c866" stroke-width="0.6"/><circle cx="8" cy="8.5" r="2.6" fill="none" stroke="#fff" stroke-width="1.6"/></svg><div class="abs" style="left:64px;top:496px;width:16px;height:15px;background:#fdebb3;border:1px solid #444;border-radius:4px;font-size:10.5px;line-height:13px;text-align:center;color:#333">48</div>
<div class="abs" style="left:84px;top:500px;width:33px;height:21px;background:#f3f3f3;border:2px solid #8c8c8c;border-radius:4px;font-size:13px;line-height:17px;text-align:center;color:#333">001</div>
<div class="abs" style="left:125px;top:501px;font-size:14px;line-height:18px;color:#333;white-space:nowrap;letter-spacing:-0.25px">Parkeringsplatser</div>
<svg class="abs" style="left:22px;top:537px" width="14" height="14" fill="none" stroke="#333" stroke-width="1.1"><rect x="0.55" y="0.55" width="12.9" height="12.9" rx="1.2"/><path d="M4 7 H10 M7 4 V10"/></svg>
<svg class="abs" style="left:44px;top:536px" width="16" height="16"><path d="M8 8 V0 A8 8 0 0 0 0 8 Z" fill="#8c8c8c"/><path d="M8 8 H16 A8 8 0 0 0 8 0 Z" fill="#fdd98a"/><path d="M8 8 H0 A8 8 0 0 0 8 16 Z" fill="#1aaee0"/><path d="M8 8 V16 A8 8 0 0 0 16 8 Z" fill="#129c72"/></svg>
<svg class="abs" style="left:68px;top:539px" width="16" height="14"><path d="M0.5 2 Q0.5 0.5 2 0.5 H6 L8 2.5 H14 Q15.5 2.5 15.5 4 V12.5 Q15.5 13.5 14.5 13.5 H1.5 Q0.5 13.5 0.5 12.5 Z" fill="#fcd986" stroke="#f2c866" stroke-width="0.6"/><circle cx="8" cy="8.5" r="2.6" fill="none" stroke="#fff" stroke-width="1.6"/></svg><div class="abs" style="left:78px;top:530px;width:16px;height:15px;background:#fdebb3;border:1px solid #444;border-radius:4px;font-size:10.5px;line-height:13px;text-align:center;color:#333">16</div>
<div class="abs" style="left:98px;top:534px;width:33px;height:21px;background:#f3f3f3;border:2px solid #8c8c8c;border-radius:4px;font-size:13px;line-height:17px;text-align:center;color:#333">001</div>
<div class="abs" style="left:139px;top:535px;font-size:14px;line-height:18px;color:#333;white-space:nowrap;letter-spacing:-0.25px">Parkeringsplatser Elbil</div></div>
<div id="canvas"><svg class="abs" style="left:-377px;top:-60px" width="1920" height="1080" font-family="Liberation Sans, sans-serif">
<line x1="486.7" y1="60" x2="486.7" y2="625" stroke="#777" stroke-width="1.2"/>
<path d="M487 625.5 H509" stroke="#222" stroke-width="1.8"/>
<rect x="488.5" y="315" width="16" height="64" fill="#fff" stroke="#777" stroke-width="1"/><line x1="489" y1="315" x2="489" y2="379" stroke="#333" stroke-width="2"/>
<g><rect x="509" y="60.3" width="457.5" height="1.6" fill="#a8c6ea"/>
<rect x="509" y="62" width="457.5" height="1.4" fill="#efe1b4"/>
<line x1="518" y1="70" x2="899" y2="70" stroke="#b3b3b3" stroke-width="1.2" stroke-dasharray="11 7 1.5 7"/><rect x="508" y="62" width="2.2" height="15" fill="#efe1b4"/>
<path d="M509.5 76.8 H966.3 V333.3 H693.3 V227.5 H509.5 Z" fill="#f3d3ad" stroke="#efe1b4" stroke-width="2.2"/>
<rect x="509.5" y="234.5" width="178" height="231" fill="#d3dcec" stroke="#efe1b4" stroke-width="2.2"/>
<rect x="509.5" y="475" width="178" height="127.5" fill="#93c8b9" stroke="#efe1b4" stroke-width="2.2"/>
<rect x="693.5" y="346.5" width="272.8" height="256" fill="#efc18f" stroke="#efe1b4" stroke-width="2.2"/>
<line x1="700" y1="340" x2="962" y2="340" stroke="#9a9a9a" stroke-width="1" stroke-dasharray="9 4 1.5 4"/>
<rect x="509.5" y="66.5" width="6.5" height="7" rx="1" fill="#fff" stroke="#666" stroke-width="1.2"/>
<rect x="634.5" y="66.5" width="7" height="7" rx="1" fill="#fff" stroke="#666" stroke-width="1.2"/>
<line x1="901.5" y1="63" x2="901.5" y2="76" stroke="#888" stroke-width="1"/><line x1="908" y1="63" x2="908" y2="76" stroke="#888" stroke-width="1"/>
<line x1="966" y1="63" x2="966" y2="76" stroke="#555" stroke-width="1.5"/>
<rect x="690" y="337" width="6" height="6" fill="#fff" stroke="#666" stroke-width="1"/>
<rect x="963" y="337" width="6" height="6" fill="#fff" stroke="#666" stroke-width="1"/>
<line x1="975.8" y1="60" x2="975.8" y2="625" stroke="#b8b8b8" stroke-width="1"/>
<line x1="978.3" y1="60" x2="978.3" y2="625" stroke="#b8b8b8" stroke-width="1"/>
<path d="M641.8 147 V100.7 H557 Q534 100.7 534 124 V177 Q534 200 557 200 H635 M641.8 147 H578.7 V156 H635 V226" fill="none" stroke="rgba(110,80,50,0.45)" stroke-width="1"/>
<path d="M620 190 L635 200 L620 210 Z" fill="none" stroke="rgba(110,80,50,0.45)" stroke-width="1"/>
<path d="M635 201 V226" fill="none" stroke="rgba(110,80,50,0.45)" stroke-width="1"/>
<rect x="795.6" y="203" width="63" height="129" fill="none" stroke="rgba(110,80,50,0.6)" stroke-width="1.2"/>
<line x1="816.4" y1="203" x2="816.4" y2="332" stroke="rgba(110,80,50,0.45)" stroke-width="1"/>
<circle cx="787.5" cy="225" r="17" fill="none" stroke="rgba(110,80,50,0.45)" stroke-width="0.9"/>
<circle cx="790" cy="225" r="10" fill="none" stroke="rgba(110,80,50,0.45)" stroke-width="0.8"/>
<circle cx="787.5" cy="267" r="17" fill="none" stroke="rgba(110,80,50,0.45)" stroke-width="0.9"/>
<circle cx="790" cy="267" r="10" fill="none" stroke="rgba(110,80,50,0.45)" stroke-width="0.8"/>
<circle cx="787.5" cy="311.5" r="17" fill="none" stroke="rgba(110,80,50,0.45)" stroke-width="0.9"/>
<circle cx="790" cy="311.5" r="10" fill="none" stroke="rgba(110,80,50,0.45)" stroke-width="0.8"/>
<path d="M923.6 124 V332 M923.6 162.8 H966 M923.6 205 H966 M923.6 290.7 H966" fill="none" stroke="rgba(110,80,50,0.6)" stroke-width="1.1"/>
<path d="M918 104 L909 160 M909 245 L924 205 M909 250 L924 290 M926 295 L950 330 M932 130 L955 155" fill="none" stroke="rgba(110,80,50,0.45)" stroke-width="0.8"/>
<circle cx="935" cy="175" r="7" fill="none" stroke="rgba(110,80,50,0.45)" stroke-width="0.8"/>
<circle cx="950" cy="175" r="7" fill="none" stroke="rgba(110,80,50,0.45)" stroke-width="0.8"/>
<circle cx="935" cy="194" r="7" fill="none" stroke="rgba(110,80,50,0.45)" stroke-width="0.8"/>
<circle cx="950" cy="194" r="6" fill="none" stroke="rgba(110,80,50,0.45)" stroke-width="0.8"/>
<rect x="926" y="220" width="35" height="57" fill="none" stroke="rgba(110,80,50,0.45)" stroke-width="1"/>
<rect x="928.5" y="223" width="30" height="24" rx="5" fill="none" stroke="rgba(110,80,50,0.45)" stroke-width="0.8"/><rect x="928.5" y="250" width="30" height="24" rx="5" fill="none" stroke="rgba(110,80,50,0.45)" stroke-width="0.8"/>
<line x1="940.7" y1="205" x2="940.7" y2="332" stroke="rgba(110,80,50,0.45)" stroke-width="0.8"/>
<circle cx="945" cy="235" r="4" fill="none" stroke="rgba(110,80,50,0.6)" stroke-width="1.5"/><circle cx="945" cy="261" r="4" fill="none" stroke="rgba(110,80,50,0.6)" stroke-width="1.5"/>
<circle cx="944" cy="312" r="11" fill="none" stroke="rgba(110,80,50,0.45)" stroke-width="0.8"/>
<circle cx="939" cy="138" r="3" fill="none" stroke="rgba(110,80,50,0.45)" stroke-width="0.8"/><circle cx="951" cy="127" r="3" fill="none" stroke="rgba(110,80,50,0.45)" stroke-width="0.8"/>
<rect x="510" y="235" width="42" height="42" fill="none" stroke="rgba(60,60,80,0.55)" stroke-width="0.8"/>
<circle cx="530" cy="255" r="17" fill="none" stroke="rgba(60,60,80,0.55)" stroke-width="0.8" stroke-dasharray="3 2"/>
<path d="M530 248 V276 M522 269 H538 L530 276 Z M523 247 H536 V260" fill="none" stroke="rgba(60,60,80,0.55)" stroke-width="0.8"/>
<path d="M624 236 V262 Q626 292 660 297 H686" fill="none" stroke="rgba(60,60,80,0.55)" stroke-width="1.1"/>
<circle cx="630" cy="281" r="1.8" fill="none" stroke="rgba(60,60,80,0.55)" stroke-width="0.8"/><circle cx="640" cy="291" r="1.8" fill="none" stroke="rgba(60,60,80,0.55)" stroke-width="0.8"/>
<path d="M526 418 H540 Q558 418 559 431 Q558 445 540 445 H526 Q511 445 511 431 Q511 418 526 418 Z M526 418 Q523 431 526 445" fill="none" stroke="rgba(60,60,80,0.55)" stroke-width="0.8"/>
<rect x="517" y="427" width="4" height="8" fill="none" stroke="rgba(60,60,80,0.55)" stroke-width="0.7"/>
<path d="M582 465 A43 35 0 0 1 668 465 Z M590 465 A35 28 0 0 1 660 465" fill="none" stroke="rgba(60,60,80,0.55)" stroke-width="0.9"/>
<path d="M604 465 V456 A21 15 0 0 1 646 456 V465" fill="none" stroke="rgba(60,60,80,0.55)" stroke-width="0.7"/>
<circle cx="614" cy="457" r="2.6" fill="none" stroke="rgba(60,60,80,0.55)" stroke-width="0.8"/><circle cx="636" cy="457" r="2.6" fill="none" stroke="rgba(60,60,80,0.55)" stroke-width="0.8"/><circle cx="625" cy="451" r="1.8" fill="none" stroke="rgba(60,60,80,0.55)" stroke-width="0.7"/><circle cx="625" cy="461" r="1.2" fill="none" stroke="rgba(60,60,80,0.55)" stroke-width="0.6"/>
<path d="M600 476 V514 M640 476 V514 M600 514 H686 M600 514 L643 532 L686 514" fill="none" stroke="rgba(40,80,70,0.5)" stroke-width="0.8"/>
<path d="M514 482 V500 M520 482 V500 M522 500 L529 481 M511 500 H535 M542 482 V500 M548 482 V500 M550 500 L557 481 M539 500 H563 M570 482 V500 M576 482 V500 M578 500 L585 481 M567 500 H591" fill="none" stroke="rgba(40,80,70,0.5)" stroke-width="0.8"/>
<text x="624" y="501" font-size="11" fill="rgba(40,80,70,0.75)" text-anchor="middle">G</text><text x="666" y="501" font-size="11" fill="rgba(40,80,70,0.75)" text-anchor="middle">S</text>
<path d="M694 364 H748 A54 54 0 0 1 694 418" fill="none" stroke="rgba(110,80,50,0.28)" stroke-width="0.8"/>
<rect x="832" y="418" width="33" height="28" rx="1" fill="none" stroke="rgba(110,80,50,0.28)" stroke-width="0.9"/><line x1="832" y1="420" x2="865" y2="420" stroke="rgba(110,80,50,0.28)" stroke-width="1.6"/>
<rect x="832" y="533" width="33" height="28" rx="1" fill="none" stroke="rgba(110,80,50,0.28)" stroke-width="0.9"/><line x1="832" y1="559" x2="865" y2="559" stroke="rgba(110,80,50,0.28)" stroke-width="1.6"/>
<rect x="874" y="418" width="33" height="28" rx="1" fill="none" stroke="rgba(110,80,50,0.28)" stroke-width="0.9"/><line x1="874" y1="420" x2="907" y2="420" stroke="rgba(110,80,50,0.28)" stroke-width="1.6"/>
<rect x="874" y="533" width="33" height="28" rx="1" fill="none" stroke="rgba(110,80,50,0.28)" stroke-width="0.9"/><line x1="874" y1="559" x2="907" y2="559" stroke="rgba(110,80,50,0.28)" stroke-width="1.6"/>
<rect x="917" y="418" width="33" height="28" rx="1" fill="none" stroke="rgba(110,80,50,0.28)" stroke-width="0.9"/><line x1="917" y1="420" x2="950" y2="420" stroke="rgba(110,80,50,0.28)" stroke-width="1.6"/>
<rect x="917" y="533" width="33" height="28" rx="1" fill="none" stroke="rgba(110,80,50,0.28)" stroke-width="0.9"/><line x1="917" y1="559" x2="950" y2="559" stroke="rgba(110,80,50,0.28)" stroke-width="1.6"/>
<rect x="827" y="458" width="128" height="63" fill="none" stroke="rgba(110,80,50,0.28)" stroke-width="0.9"/>
<text x="598" y="349" font-size="17" fill="#7b8392" text-anchor="middle" textLength="27" lengthAdjust="spacingAndGlyphs">WC</text>
<text x="598" y="370" font-size="17" fill="#7b8392" text-anchor="middle" textLength="48" lengthAdjust="spacingAndGlyphs">8.1 m²</text>
<text x="598" y="547.5" font-size="16.5" fill="#3a6a5b" text-anchor="middle" stroke="#3a6a5b" stroke-width="0.15" style="letter-spacing:0.6px">ENTRE'</text>
<text x="598" y="568" font-size="17" fill="#3e7061" text-anchor="middle" textLength="48" lengthAdjust="spacingAndGlyphs">4.5 m²</text>
<text x="766" y="473.5" font-size="17" fill="#c49a6e" text-anchor="middle" textLength="35" lengthAdjust="spacingAndGlyphs">KÖK</text>
<text x="766" y="494" font-size="17" fill="#c49a6e" text-anchor="middle" textLength="57" lengthAdjust="spacingAndGlyphs">28.2 m²</text>
<text x="0" y="0" font-size="17" fill="#c49a6e" text-anchor="middle" transform="translate(726 390) rotate(-90)">9x21</text>
<text x="0" y="0" font-size="17" fill="#c49a6e" text-anchor="middle" transform="translate(720 563) rotate(-90)">9x21</text>
<text x="591" y="247" font-size="13" font-weight="bold" fill="#555c66" text-anchor="middle">IV 2</text>
<text x="566" y="463" font-size="13" font-weight="bold" fill="#555c66" text-anchor="middle">IV 2</text>
<text x="0" y="0" font-size="13" font-weight="bold" fill="#555c66" text-anchor="middle" transform="translate(674 318) rotate(90)">IV 2</text>
<text x="0" y="0" font-size="13" font-weight="bold" fill="#3e5f55" text-anchor="middle" transform="translate(674 556) rotate(90)">IV 1</text>
<path d="M487 625 H580 M652 625 H967" fill="none" stroke="#8a8a8a" stroke-width="1.2"/>
<path d="M580 603 V625 M652 603 V625 M580 618 H585 V625 M647 618 H652 V625" fill="none" stroke="#777" stroke-width="1"/>
<path d="M583 625 A63 63 0 0 0 646 686 V625" fill="none" stroke="#777" stroke-width="0.8"/>
<text x="616" y="668" font-size="17" fill="#222" text-anchor="middle" textLength="40" lengthAdjust="spacingAndGlyphs">10x21</text>
<rect x="767" y="608" width="78" height="15.5" fill="none" stroke="#666" stroke-width="1.2"/>
<rect x="852" y="608" width="79" height="15.5" fill="none" stroke="#666" stroke-width="1.2"/>
<line x1="767" y1="623.5" x2="845" y2="623.5" stroke="#333" stroke-width="1.5"/><line x1="852" y1="623.5" x2="931" y2="623.5" stroke="#333" stroke-width="1.5"/>
<text x="806" y="668" font-size="17" fill="#222" text-anchor="middle" textLength="62" lengthAdjust="spacingAndGlyphs">11x12 Ö</text>
<text x="892" y="668" font-size="17" fill="#222" text-anchor="middle" textLength="59" lengthAdjust="spacingAndGlyphs">11x12 F</text>
<path d="M977 646 V636 M974.5 640 L977 635 L979.5 640" fill="none" stroke="#777" stroke-width="0.8"/></g>
<g transform="translate(480 0)"><rect x="509" y="60.3" width="457.5" height="1.6" fill="#a8c6ea"/>
<rect x="509" y="62" width="457.5" height="1.4" fill="#efe1b4"/>
<line x1="518" y1="70" x2="899" y2="70" stroke="#b3b3b3" stroke-width="1.2" stroke-dasharray="11 7 1.5 7"/><rect x="508" y="62" width="2.2" height="15" fill="#efe1b4"/>
<path d="M509.5 76.8 H966.3 V333.3 H693.3 V227.5 H509.5 Z" fill="#f3d3ad" stroke="#efe1b4" stroke-width="2.2"/>
<rect x="509.5" y="234.5" width="178" height="231" fill="#d3dcec" stroke="#efe1b4" stroke-width="2.2"/>
<rect x="509.5" y="475" width="178" height="127.5" fill="#93c8b9" stroke="#efe1b4" stroke-width="2.2"/>
<rect x="693.5" y="346.5" width="272.8" height="256" fill="#f3d3ad" stroke="#efe1b4" stroke-width="2.2"/>
<line x1="700" y1="340" x2="962" y2="340" stroke="#9a9a9a" stroke-width="1" stroke-dasharray="9 4 1.5 4"/>
<rect x="509.5" y="66.5" width="6.5" height="7" rx="1" fill="#fff" stroke="#666" stroke-width="1.2"/>
<rect x="634.5" y="66.5" width="7" height="7" rx="1" fill="#fff" stroke="#666" stroke-width="1.2"/>
<line x1="901.5" y1="63" x2="901.5" y2="76" stroke="#888" stroke-width="1"/><line x1="908" y1="63" x2="908" y2="76" stroke="#888" stroke-width="1"/>
<line x1="966" y1="63" x2="966" y2="76" stroke="#555" stroke-width="1.5"/>
<rect x="690" y="337" width="6" height="6" fill="#fff" stroke="#666" stroke-width="1"/>
<rect x="963" y="337" width="6" height="6" fill="#fff" stroke="#666" stroke-width="1"/>
<line x1="975.8" y1="60" x2="975.8" y2="625" stroke="#b8b8b8" stroke-width="1"/>
<line x1="978.3" y1="60" x2="978.3" y2="625" stroke="#b8b8b8" stroke-width="1"/>
<path d="M641.8 147 V100.7 H557 Q534 100.7 534 124 V177 Q534 200 557 200 H635 M641.8 147 H578.7 V156 H635 V226" fill="none" stroke="rgba(110,80,50,0.45)" stroke-width="1"/>
<path d="M620 190 L635 200 L620 210 Z" fill="none" stroke="rgba(110,80,50,0.45)" stroke-width="1"/>
<path d="M635 201 V226" fill="none" stroke="rgba(110,80,50,0.45)" stroke-width="1"/>
<rect x="795.6" y="203" width="63" height="129" fill="none" stroke="rgba(110,80,50,0.6)" stroke-width="1.2"/>
<line x1="816.4" y1="203" x2="816.4" y2="332" stroke="rgba(110,80,50,0.45)" stroke-width="1"/>
<circle cx="787.5" cy="225" r="17" fill="none" stroke="rgba(110,80,50,0.45)" stroke-width="0.9"/>
<circle cx="790" cy="225" r="10" fill="none" stroke="rgba(110,80,50,0.45)" stroke-width="0.8"/>
<circle cx="787.5" cy="267" r="17" fill="none" stroke="rgba(110,80,50,0.45)" stroke-width="0.9"/>
<circle cx="790" cy="267" r="10" fill="none" stroke="rgba(110,80,50,0.45)" stroke-width="0.8"/>
<circle cx="787.5" cy="311.5" r="17" fill="none" stroke="rgba(110,80,50,0.45)" stroke-width="0.9"/>
<circle cx="790" cy="311.5" r="10" fill="none" stroke="rgba(110,80,50,0.45)" stroke-width="0.8"/>
<path d="M923.6 124 V332 M923.6 162.8 H966 M923.6 205 H966 M923.6 290.7 H966" fill="none" stroke="rgba(110,80,50,0.6)" stroke-width="1.1"/>
<path d="M918 104 L909 160 M909 245 L924 205 M909 250 L924 290 M926 295 L950 330 M932 130 L955 155" fill="none" stroke="rgba(110,80,50,0.45)" stroke-width="0.8"/>
<circle cx="935" cy="175" r="7" fill="none" stroke="rgba(110,80,50,0.45)" stroke-width="0.8"/>
<circle cx="950" cy="175" r="7" fill="none" stroke="rgba(110,80,50,0.45)" stroke-width="0.8"/>
<circle cx="935" cy="194" r="7" fill="none" stroke="rgba(110,80,50,0.45)" stroke-width="0.8"/>
<circle cx="950" cy="194" r="6" fill="none" stroke="rgba(110,80,50,0.45)" stroke-width="0.8"/>
<rect x="926" y="220" width="35" height="57" fill="none" stroke="rgba(110,80,50,0.45)" stroke-width="1"/>
<rect x="928.5" y="223" width="30" height="24" rx="5" fill="none" stroke="rgba(110,80,50,0.45)" stroke-width="0.8"/><rect x="928.5" y="250" width="30" height="24" rx="5" fill="none" stroke="rgba(110,80,50,0.45)" stroke-width="0.8"/>
<line x1="940.7" y1="205" x2="940.7" y2="332" stroke="rgba(110,80,50,0.45)" stroke-width="0.8"/>
<circle cx="945" cy="235" r="4" fill="none" stroke="rgba(110,80,50,0.6)" stroke-width="1.5"/><circle cx="945" cy="261" r="4" fill="none" stroke="rgba(110,80,50,0.6)" stroke-width="1.5"/>
<circle cx="944" cy="312" r="11" fill="none" stroke="rgba(110,80,50,0.45)" stroke-width="0.8"/>
<circle cx="939" cy="138" r="3" fill="none" stroke="rgba(110,80,50,0.45)" stroke-width="0.8"/><circle cx="951" cy="127" r="3" fill="none" stroke="rgba(110,80,50,0.45)" stroke-width="0.8"/>
<rect x="510" y="235" width="42" height="42" fill="none" stroke="rgba(60,60,80,0.55)" stroke-width="0.8"/>
<circle cx="530" cy="255" r="17" fill="none" stroke="rgba(60,60,80,0.55)" stroke-width="0.8" stroke-dasharray="3 2"/>
<path d="M530 248 V276 M522 269 H538 L530 276 Z M523 247 H536 V260" fill="none" stroke="rgba(60,60,80,0.55)" stroke-width="0.8"/>
<path d="M624 236 V262 Q626 292 660 297 H686" fill="none" stroke="rgba(60,60,80,0.55)" stroke-width="1.1"/>
<circle cx="630" cy="281" r="1.8" fill="none" stroke="rgba(60,60,80,0.55)" stroke-width="0.8"/><circle cx="640" cy="291" r="1.8" fill="none" stroke="rgba(60,60,80,0.55)" stroke-width="0.8"/>
<path d="M526 418 H540 Q558 418 559 431 Q558 445 540 445 H526 Q511 445 511 431 Q511 418 526 418 Z M526 418 Q523 431 526 445" fill="none" stroke="rgba(60,60,80,0.55)" stroke-width="0.8"/>
<rect x="517" y="427" width="4" height="8" fill="none" stroke="rgba(60,60,80,0.55)" stroke-width="0.7"/>
<path d="M582 465 A43 35 0 0 1 668 465 Z M590 465 A35 28 0 0 1 660 465" fill="none" stroke="rgba(60,60,80,0.55)" stroke-width="0.9"/>
<path d="M604 465 V456 A21 15 0 0 1 646 456 V465" fill="none" stroke="rgba(60,60,80,0.55)" stroke-width="0.7"/>
<circle cx="614" cy="457" r="2.6" fill="none" stroke="rgba(60,60,80,0.55)" stroke-width="0.8"/><circle cx="636" cy="457" r="2.6" fill="none" stroke="rgba(60,60,80,0.55)" stroke-width="0.8"/><circle cx="625" cy="451" r="1.8" fill="none" stroke="rgba(60,60,80,0.55)" stroke-width="0.7"/><circle cx="625" cy="461" r="1.2" fill="none" stroke="rgba(60,60,80,0.55)" stroke-width="0.6"/>
<path d="M600 476 V514 M640 476 V514 M600 514 H686 M600 514 L643 532 L686 514" fill="none" stroke="rgba(40,80,70,0.5)" stroke-width="0.8"/>
<path d="M514 482 V500 M520 482 V500 M522 500 L529 481 M511 500 H535 M542 482 V500 M548 482 V500 M550 500 L557 481 M539 500 H563 M570 482 V500 M576 482 V500 M578 500 L585 481 M567 500 H591" fill="none" stroke="rgba(40,80,70,0.5)" stroke-width="0.8"/>
<text x="624" y="501" font-size="11" fill="rgba(40,80,70,0.75)" text-anchor="middle">G</text><text x="666" y="501" font-size="11" fill="rgba(40,80,70,0.75)" text-anchor="middle">S</text>
<path d="M694 364 H748 A54 54 0 0 1 694 418" fill="none" stroke="rgba(110,80,50,0.38)" stroke-width="0.8"/>
<rect x="832" y="418" width="33" height="28" rx="1" fill="none" stroke="rgba(110,80,50,0.38)" stroke-width="0.9"/><line x1="832" y1="420" x2="865" y2="420" stroke="rgba(110,80,50,0.38)" stroke-width="1.6"/>
<rect x="832" y="533" width="33" height="28" rx="1" fill="none" stroke="rgba(110,80,50,0.38)" stroke-width="0.9"/><line x1="832" y1="559" x2="865" y2="559" stroke="rgba(110,80,50,0.38)" stroke-width="1.6"/>
<rect x="874" y="418" width="33" height="28" rx="1" fill="none" stroke="rgba(110,80,50,0.38)" stroke-width="0.9"/><line x1="874" y1="420" x2="907" y2="420" stroke="rgba(110,80,50,0.38)" stroke-width="1.6"/>
<rect x="874" y="533" width="33" height="28" rx="1" fill="none" stroke="rgba(110,80,50,0.38)" stroke-width="0.9"/><line x1="874" y1="559" x2="907" y2="559" stroke="rgba(110,80,50,0.38)" stroke-width="1.6"/>
<rect x="917" y="418" width="33" height="28" rx="1" fill="none" stroke="rgba(110,80,50,0.38)" stroke-width="0.9"/><line x1="917" y1="420" x2="950" y2="420" stroke="rgba(110,80,50,0.38)" stroke-width="1.6"/>
<rect x="917" y="533" width="33" height="28" rx="1" fill="none" stroke="rgba(110,80,50,0.38)" stroke-width="0.9"/><line x1="917" y1="559" x2="950" y2="559" stroke="rgba(110,80,50,0.38)" stroke-width="1.6"/>
<rect x="827" y="458" width="128" height="63" fill="none" stroke="rgba(110,80,50,0.38)" stroke-width="0.9"/>
<text x="598" y="349" font-size="17" fill="#7b8392" text-anchor="middle" textLength="27" lengthAdjust="spacingAndGlyphs">WC</text>
<text x="598" y="370" font-size="17" fill="#7b8392" text-anchor="middle" textLength="48" lengthAdjust="spacingAndGlyphs">8.1 m²</text>
<text x="598" y="547.5" font-size="16.5" fill="#3a6a5b" text-anchor="middle" stroke="#3a6a5b" stroke-width="0.15" style="letter-spacing:0.6px">ENTRE'</text>
<text x="598" y="568" font-size="17" fill="#3e7061" text-anchor="middle" textLength="48" lengthAdjust="spacingAndGlyphs">4.5 m²</text>
<text x="766" y="473.5" font-size="17" fill="#a08670" text-anchor="middle" textLength="35" lengthAdjust="spacingAndGlyphs">KÖK</text>
<text x="766" y="494" font-size="17" fill="#a08670" text-anchor="middle" textLength="57" lengthAdjust="spacingAndGlyphs">28.2 m²</text>
<text x="0" y="0" font-size="17" fill="#a08670" text-anchor="middle" transform="translate(726 390) rotate(-90)">9x21</text>
<text x="0" y="0" font-size="17" fill="#a08670" text-anchor="middle" transform="translate(720 563) rotate(-90)">9x21</text>
<path d="M487 625 H580 M652 625 H967" fill="none" stroke="#8a8a8a" stroke-width="1.2"/>
<path d="M580 603 V625 M652 603 V625 M580 618 H585 V625 M647 618 H652 V625" fill="none" stroke="#777" stroke-width="1"/>
<path d="M583 625 A63 63 0 0 0 646 686 V625" fill="none" stroke="#777" stroke-width="0.8"/>
<text x="616" y="668" font-size="17" fill="#222" text-anchor="middle" textLength="40" lengthAdjust="spacingAndGlyphs">10x21</text>
<rect x="767" y="608" width="78" height="15.5" fill="none" stroke="#666" stroke-width="1.2"/>
<rect x="852" y="608" width="79" height="15.5" fill="none" stroke="#666" stroke-width="1.2"/>
<line x1="767" y1="623.5" x2="845" y2="623.5" stroke="#333" stroke-width="1.5"/><line x1="852" y1="623.5" x2="931" y2="623.5" stroke="#333" stroke-width="1.5"/>
<text x="806" y="668" font-size="17" fill="#222" text-anchor="middle" textLength="62" lengthAdjust="spacingAndGlyphs">11x12 Ö</text>
<text x="892" y="668" font-size="17" fill="#222" text-anchor="middle" textLength="59" lengthAdjust="spacingAndGlyphs">11x12 F</text>
<path d="M977 646 V636 M974.5 640 L977 635 L979.5 640" fill="none" stroke="#777" stroke-width="0.8"/></g>
<g transform="translate(960 0)"><rect x="509" y="60.3" width="457.5" height="1.6" fill="#a8c6ea"/>
<rect x="509" y="62" width="457.5" height="1.4" fill="#efe1b4"/>
<line x1="518" y1="70" x2="899" y2="70" stroke="#b3b3b3" stroke-width="1.2" stroke-dasharray="11 7 1.5 7"/><rect x="508" y="62" width="2.2" height="15" fill="#efe1b4"/>
<path d="M509.5 76.8 H966.3 V333.3 H693.3 V227.5 H509.5 Z" fill="#f3d3ad" stroke="#efe1b4" stroke-width="2.2"/>
<rect x="509.5" y="234.5" width="178" height="231" fill="#d3dcec" stroke="#efe1b4" stroke-width="2.2"/>
<rect x="509.5" y="475" width="178" height="127.5" fill="#93c8b9" stroke="#efe1b4" stroke-width="2.2"/>
<rect x="693.5" y="346.5" width="272.8" height="256" fill="#f3d3ad" stroke="#efe1b4" stroke-width="2.2"/>
<line x1="700" y1="340" x2="962" y2="340" stroke="#9a9a9a" stroke-width="1" stroke-dasharray="9 4 1.5 4"/>
<rect x="509.5" y="66.5" width="6.5" height="7" rx="1" fill="#fff" stroke="#666" stroke-width="1.2"/>
<rect x="634.5" y="66.5" width="7" height="7" rx="1" fill="#fff" stroke="#666" stroke-width="1.2"/>
<line x1="901.5" y1="63" x2="901.5" y2="76" stroke="#888" stroke-width="1"/><line x1="908" y1="63" x2="908" y2="76" stroke="#888" stroke-width="1"/>
<line x1="966" y1="63" x2="966" y2="76" stroke="#555" stroke-width="1.5"/>
<rect x="690" y="337" width="6" height="6" fill="#fff" stroke="#666" stroke-width="1"/>
<rect x="963" y="337" width="6" height="6" fill="#fff" stroke="#666" stroke-width="1"/>
<line x1="975.8" y1="60" x2="975.8" y2="625" stroke="#b8b8b8" stroke-width="1"/>
<line x1="978.3" y1="60" x2="978.3" y2="625" stroke="#b8b8b8" stroke-width="1"/>
<path d="M641.8 147 V100.7 H557 Q534 100.7 534 124 V177 Q534 200 557 200 H635 M641.8 147 H578.7 V156 H635 V226" fill="none" stroke="rgba(110,80,50,0.45)" stroke-width="1"/>
<path d="M620 190 L635 200 L620 210 Z" fill="none" stroke="rgba(110,80,50,0.45)" stroke-width="1"/>
<path d="M635 201 V226" fill="none" stroke="rgba(110,80,50,0.45)" stroke-width="1"/>
<rect x="795.6" y="203" width="63" height="129" fill="none" stroke="rgba(110,80,50,0.6)" stroke-width="1.2"/>
<line x1="816.4" y1="203" x2="816.4" y2="332" stroke="rgba(110,80,50,0.45)" stroke-width="1"/>
<circle cx="787.5" cy="225" r="17" fill="none" stroke="rgba(110,80,50,0.45)" stroke-width="0.9"/>
<circle cx="790" cy="225" r="10" fill="none" stroke="rgba(110,80,50,0.45)" stroke-width="0.8"/>
<circle cx="787.5" cy="267" r="17" fill="none" stroke="rgba(110,80,50,0.45)" stroke-width="0.9"/>
<circle cx="790" cy="267" r="10" fill="none" stroke="rgba(110,80,50,0.45)" stroke-width="0.8"/>
<circle cx="787.5" cy="311.5" r="17" fill="none" stroke="rgba(110,80,50,0.45)" stroke-width="0.9"/>
<circle cx="790" cy="311.5" r="10" fill="none" stroke="rgba(110,80,50,0.45)" stroke-width="0.8"/>
<path d="M923.6 124 V332 M923.6 162.8 H966 M923.6 205 H966 M923.6 290.7 H966" fill="none" stroke="rgba(110,80,50,0.6)" stroke-width="1.1"/>
<path d="M918 104 L909 160 M909 245 L924 205 M909 250 L924 290 M926 295 L950 330 M932 130 L955 155" fill="none" stroke="rgba(110,80,50,0.45)" stroke-width="0.8"/>
<circle cx="935" cy="175" r="7" fill="none" stroke="rgba(110,80,50,0.45)" stroke-width="0.8"/>
<circle cx="950" cy="175" r="7" fill="none" stroke="rgba(110,80,50,0.45)" stroke-width="0.8"/>
<circle cx="935" cy="194" r="7" fill="none" stroke="rgba(110,80,50,0.45)" stroke-width="0.8"/>
<circle cx="950" cy="194" r="6" fill="none" stroke="rgba(110,80,50,0.45)" stroke-width="0.8"/>
<rect x="926" y="220" width="35" height="57" fill="none" stroke="rgba(110,80,50,0.45)" stroke-width="1"/>
<rect x="928.5" y="223" width="30" height="24" rx="5" fill="none" stroke="rgba(110,80,50,0.45)" stroke-width="0.8"/><rect x="928.5" y="250" width="30" height="24" rx="5" fill="none" stroke="rgba(110,80,50,0.45)" stroke-width="0.8"/>
<line x1="940.7" y1="205" x2="940.7" y2="332" stroke="rgba(110,80,50,0.45)" stroke-width="0.8"/>
<circle cx="945" cy="235" r="4" fill="none" stroke="rgba(110,80,50,0.6)" stroke-width="1.5"/><circle cx="945" cy="261" r="4" fill="none" stroke="rgba(110,80,50,0.6)" stroke-width="1.5"/>
<circle cx="944" cy="312" r="11" fill="none" stroke="rgba(110,80,50,0.45)" stroke-width="0.8"/>
<circle cx="939" cy="138" r="3" fill="none" stroke="rgba(110,80,50,0.45)" stroke-width="0.8"/><circle cx="951" cy="127" r="3" fill="none" stroke="rgba(110,80,50,0.45)" stroke-width="0.8"/>
<rect x="510" y="235" width="42" height="42" fill="none" stroke="rgba(60,60,80,0.55)" stroke-width="0.8"/>
<circle cx="530" cy="255" r="17" fill="none" stroke="rgba(60,60,80,0.55)" stroke-width="0.8" stroke-dasharray="3 2"/>
<path d="M530 248 V276 M522 269 H538 L530 276 Z M523 247 H536 V260" fill="none" stroke="rgba(60,60,80,0.55)" stroke-width="0.8"/>
<path d="M624 236 V262 Q626 292 660 297 H686" fill="none" stroke="rgba(60,60,80,0.55)" stroke-width="1.1"/>
<circle cx="630" cy="281" r="1.8" fill="none" stroke="rgba(60,60,80,0.55)" stroke-width="0.8"/><circle cx="640" cy="291" r="1.8" fill="none" stroke="rgba(60,60,80,0.55)" stroke-width="0.8"/>
<path d="M526 418 H540 Q558 418 559 431 Q558 445 540 445 H526 Q511 445 511 431 Q511 418 526 418 Z M526 418 Q523 431 526 445" fill="none" stroke="rgba(60,60,80,0.55)" stroke-width="0.8"/>
<rect x="517" y="427" width="4" height="8" fill="none" stroke="rgba(60,60,80,0.55)" stroke-width="0.7"/>
<path d="M582 465 A43 35 0 0 1 668 465 Z M590 465 A35 28 0 0 1 660 465" fill="none" stroke="rgba(60,60,80,0.55)" stroke-width="0.9"/>
<path d="M604 465 V456 A21 15 0 0 1 646 456 V465" fill="none" stroke="rgba(60,60,80,0.55)" stroke-width="0.7"/>
<circle cx="614" cy="457" r="2.6" fill="none" stroke="rgba(60,60,80,0.55)" stroke-width="0.8"/><circle cx="636" cy="457" r="2.6" fill="none" stroke="rgba(60,60,80,0.55)" stroke-width="0.8"/><circle cx="625" cy="451" r="1.8" fill="none" stroke="rgba(60,60,80,0.55)" stroke-width="0.7"/><circle cx="625" cy="461" r="1.2" fill="none" stroke="rgba(60,60,80,0.55)" stroke-width="0.6"/>
<path d="M600 476 V514 M640 476 V514 M600 514 H686 M600 514 L643 532 L686 514" fill="none" stroke="rgba(40,80,70,0.5)" stroke-width="0.8"/>
<path d="M514 482 V500 M520 482 V500 M522 500 L529 481 M511 500 H535 M542 482 V500 M548 482 V500 M550 500 L557 481 M539 500 H563 M570 482 V500 M576 482 V500 M578 500 L585 481 M567 500 H591" fill="none" stroke="rgba(40,80,70,0.5)" stroke-width="0.8"/>
<text x="624" y="501" font-size="11" fill="rgba(40,80,70,0.75)" text-anchor="middle">G</text><text x="666" y="501" font-size="11" fill="rgba(40,80,70,0.75)" text-anchor="middle">S</text>
<path d="M694 364 H748 A54 54 0 0 1 694 418" fill="none" stroke="rgba(110,80,50,0.38)" stroke-width="0.8"/>
<rect x="832" y="418" width="33" height="28" rx="1" fill="none" stroke="rgba(110,80,50,0.38)" stroke-width="0.9"/><line x1="832" y1="420" x2="865" y2="420" stroke="rgba(110,80,50,0.38)" stroke-width="1.6"/>
<rect x="832" y="533" width="33" height="28" rx="1" fill="none" stroke="rgba(110,80,50,0.38)" stroke-width="0.9"/><line x1="832" y1="559" x2="865" y2="559" stroke="rgba(110,80,50,0.38)" stroke-width="1.6"/>
<rect x="874" y="418" width="33" height="28" rx="1" fill="none" stroke="rgba(110,80,50,0.38)" stroke-width="0.9"/><line x1="874" y1="420" x2="907" y2="420" stroke="rgba(110,80,50,0.38)" stroke-width="1.6"/>
<rect x="874" y="533" width="33" height="28" rx="1" fill="none" stroke="rgba(110,80,50,0.38)" stroke-width="0.9"/><line x1="874" y1="559" x2="907" y2="559" stroke="rgba(110,80,50,0.38)" stroke-width="1.6"/>
<rect x="917" y="418" width="33" height="28" rx="1" fill="none" stroke="rgba(110,80,50,0.38)" stroke-width="0.9"/><line x1="917" y1="420" x2="950" y2="420" stroke="rgba(110,80,50,0.38)" stroke-width="1.6"/>
<rect x="917" y="533" width="33" height="28" rx="1" fill="none" stroke="rgba(110,80,50,0.38)" stroke-width="0.9"/><line x1="917" y1="559" x2="950" y2="559" stroke="rgba(110,80,50,0.38)" stroke-width="1.6"/>
<rect x="827" y="458" width="128" height="63" fill="none" stroke="rgba(110,80,50,0.38)" stroke-width="0.9"/>
<text x="598" y="349" font-size="17" fill="#7b8392" text-anchor="middle" textLength="27" lengthAdjust="spacingAndGlyphs">WC</text>
<text x="598" y="370" font-size="17" fill="#7b8392" text-anchor="middle" textLength="48" lengthAdjust="spacingAndGlyphs">8.1 m²</text>
<text x="598" y="547.5" font-size="16.5" fill="#3a6a5b" text-anchor="middle" stroke="#3a6a5b" stroke-width="0.15" style="letter-spacing:0.6px">ENTRE'</text>
<text x="598" y="568" font-size="17" fill="#3e7061" text-anchor="middle" textLength="48" lengthAdjust="spacingAndGlyphs">4.5 m²</text>
<text x="766" y="473.5" font-size="17" fill="#a08670" text-anchor="middle" textLength="35" lengthAdjust="spacingAndGlyphs">KÖK</text>
<text x="766" y="494" font-size="17" fill="#a08670" text-anchor="middle" textLength="57" lengthAdjust="spacingAndGlyphs">28.2 m²</text>
<text x="0" y="0" font-size="17" fill="#a08670" text-anchor="middle" transform="translate(726 390) rotate(-90)">9x21</text>
<text x="0" y="0" font-size="17" fill="#a08670" text-anchor="middle" transform="translate(720 563) rotate(-90)">9x21</text>
<path d="M487 625 H580 M652 625 H967" fill="none" stroke="#8a8a8a" stroke-width="1.2"/>
<path d="M580 603 V625 M652 603 V625 M580 618 H585 V625 M647 618 H652 V625" fill="none" stroke="#777" stroke-width="1"/>
<path d="M583 625 A63 63 0 0 0 646 686 V625" fill="none" stroke="#777" stroke-width="0.8"/>
<text x="616" y="668" font-size="17" fill="#222" text-anchor="middle" textLength="40" lengthAdjust="spacingAndGlyphs">10x21</text>
<rect x="767" y="608" width="78" height="15.5" fill="none" stroke="#666" stroke-width="1.2"/>
<rect x="852" y="608" width="79" height="15.5" fill="none" stroke="#666" stroke-width="1.2"/>
<line x1="767" y1="623.5" x2="845" y2="623.5" stroke="#333" stroke-width="1.5"/><line x1="852" y1="623.5" x2="931" y2="623.5" stroke="#333" stroke-width="1.5"/>
<text x="806" y="668" font-size="17" fill="#222" text-anchor="middle" textLength="62" lengthAdjust="spacingAndGlyphs">11x12 Ö</text>
<text x="892" y="668" font-size="17" fill="#222" text-anchor="middle" textLength="59" lengthAdjust="spacingAndGlyphs">11x12 F</text>
<path d="M977 646 V636 M974.5 640 L977 635 L979.5 640" fill="none" stroke="#777" stroke-width="0.8"/></g>
<text x="0" y="0" font-size="31.5" fill="#222" transform="translate(489 697) scale(0.765 1)">Plan vån.1</text>
<path d="M889.5 674 V709 H866 M866 701 L853 709 L866 717 Z" fill="none" stroke="#666" stroke-width="0.9"/>
<text x="0" y="0" font-size="12.5" fill="#222" text-anchor="middle" transform="translate(817 708) rotate(-90)">A</text>
<path d="M711 347 A17 17 0 0 1 694 364" fill="none" stroke="#d42a2a" stroke-width="3"/>
<path d="M949 347 A17 17 0 0 0 966 364" fill="none" stroke="#d42a2a" stroke-width="3"/>
<path d="M711 602 A17 17 0 0 0 694 585" fill="none" stroke="#d42a2a" stroke-width="3"/>
<path d="M949 602 A17 17 0 0 1 966 585" fill="none" stroke="#d42a2a" stroke-width="3"/>
<text x="688" y="346" font-size="13" fill="#d42a2a" text-anchor="middle" style="letter-spacing:-0.8px">90.00°</text>
<rect x="687" y="338" width="12" height="12" fill="none" stroke="rgba(120,120,120,0.4)" stroke-width="0.8"/>
<text x="960" y="346" font-size="13" fill="#d42a2a" text-anchor="middle" style="letter-spacing:-0.8px">90.00°</text>
<rect x="959" y="338" width="12" height="12" fill="none" stroke="rgba(120,120,120,0.4)" stroke-width="0.8"/>
<text x="688" y="602" font-size="13" fill="#d42a2a" text-anchor="middle" style="letter-spacing:-0.8px">90.00°</text>
<rect x="687" y="594" width="12" height="12" fill="none" stroke="rgba(120,120,120,0.4)" stroke-width="0.8"/>
<text x="960" y="602" font-size="13" fill="#d42a2a" text-anchor="middle" style="letter-spacing:-0.8px">90.00°</text>
<rect x="959" y="594" width="12" height="12" fill="none" stroke="rgba(120,120,120,0.4)" stroke-width="0.8"/>
<rect x="823" y="331" width="12" height="18" rx="2.5" fill="#44484d"/>
<text x="0" y="0" font-size="11" font-weight="bold" fill="#fff" text-anchor="middle" transform="translate(829 340) rotate(180) translate(0 4)">2</text>
<rect x="675" y="468" width="20" height="12" rx="2.5" fill="#44484d"/>
<text x="0" y="0" font-size="11" font-weight="bold" fill="#fff" text-anchor="middle" transform="translate(685 474) rotate(90) translate(0 4)">3</text>
<rect x="965" y="468" width="20" height="12" rx="2.5" fill="#44484d"/>
<text x="0" y="0" font-size="11" font-weight="bold" fill="#fff" text-anchor="middle" transform="translate(975 474) rotate(-90) translate(0 4)">1</text>
<rect x="823" y="603" width="12" height="18" rx="2.5" fill="#44484d"/>
<text x="0" y="0" font-size="11" font-weight="bold" fill="#fff" text-anchor="middle" transform="translate(829 612) rotate(180) translate(0 4)">4</text>
<circle cx="1626" cy="96" r="20" fill="#fcd985" style="filter:drop-shadow(0 2px 3px rgba(0,0,0,0.25))"/>
<g transform="translate(1626 96) rotate(-45)"><rect x="-10" y="-4.5" width="20" height="9" rx="1.5" fill="none" stroke="#333" stroke-width="1.5"/><path d="M-6 -4.5 V-1 M-2 -4.5 V0 M2 -4.5 V-1 M6 -4.5 V0" stroke="#333" stroke-width="1.2"/></g>
</svg><div class="abs" style="left:222px;top:16px;width:821px;height:48px;background:#fff;border-radius:8px;box-shadow:0 2px 6px rgba(0,0,0,0.22)"></div>
<svg class="abs" style="left:234px;top:33px" width="11" height="15" fill="none" stroke="#333" stroke-width="1.3"><circle cx="2.5" cy="2.5" r="1.7"/><circle cx="8.5" cy="2.5" r="1.7"/><circle cx="2.5" cy="7.5" r="1.7"/><circle cx="8.5" cy="7.5" r="1.7"/><circle cx="2.5" cy="12.5" r="1.7"/><circle cx="8.5" cy="12.5" r="1.7"/></svg>
<div class="abs" style="left:256px;top:28px;width:1px;height:23px;background:#e6e6e6"></div>
<div class="abs" style="left:266px;top:32px;font-size:13px;color:#333;letter-spacing:-0.45px;-webkit-text-stroke:0.2px #333">Mall</div>
<div class="abs" style="left:298px;top:24px;width:200px;height:32px;background:#f2f2f2;border-radius:5px"></div>
<svg class="abs" style="left:313px;top:32px" width="17" height="16" fill="none" stroke="#333" stroke-width="1"><path d="M8.5 1 L12 2.7 V6.2 L8.5 7.9 L5 6.2 V2.7 Z M5 2.7 L8.5 4.4 L12 2.7 M8.5 4.4 V7.9"/><path d="M5 7.9 L8.5 9.6 V13.1 L5 14.8 L1.5 13.1 V9.6 Z M1.5 9.6 L5 11.3 L8.5 9.6 M5 11.3 V14.8"/><path d="M12 7.9 L15.5 9.6 V13.1 L12 14.8 L8.5 13.1 V9.6 Z M8.5 9.6 L12 11.3 L15.5 9.6 M12 11.3 V14.8"/></svg>
<div class="abs" style="left:340px;top:32px;font-size:13px;color:#333;letter-spacing:-0.45px;white-space:nowrap">- Ingen mall -</div>
<svg class="abs" style="left:470px;top:37px" width="11" height="7" fill="none" stroke="#444" stroke-width="1.2"><path d="M1 1 L5.5 5.5 L10 1"/></svg>
<div class="abs" style="left:507px;top:28px;width:1px;height:23px;background:#e6e6e6"></div>
<div class="abs" style="left:516px;top:32px;font-size:13px;color:#333;letter-spacing:-0.45px;-webkit-text-stroke:0.2px #333">Fyllning</div>
<div class="abs" style="left:566px;top:24px;width:50px;height:32px;background:#f2f2f2;border-radius:5px"></div>
<div class="abs" style="left:573px;top:33px;width:14px;height:14px;background:#149f86;border-radius:3px;border:1px solid #0d7a66"></div>
<svg class="abs" style="left:596px;top:37px" width="11" height="7" fill="none" stroke="#444" stroke-width="1.2"><path d="M1 1 L5.5 5.5 L10 1"/></svg>
<div class="abs" style="left:624px;top:24px;width:60px;height:32px;background:#f2f2f2;border-radius:5px"></div>
<div class="abs" style="left:632px;top:32px;font-size:13px;color:#333">60%</div>
<svg class="abs" style="left:664px;top:37px" width="11" height="7" fill="none" stroke="#444" stroke-width="1.2"><path d="M1 1 L5.5 5.5 L10 1"/></svg>
<div class="abs" style="left:693px;top:28px;width:1px;height:23px;background:#e6e6e6"></div>
<div class="abs" style="left:702px;top:32px;font-size:13px;color:#333;letter-spacing:-0.45px;-webkit-text-stroke:0.2px #333">Kant</div>
<div class="abs" style="left:735px;top:24px;width:50px;height:32px;background:#f2f2f2;border-radius:5px"></div>
<div class="abs" style="left:742px;top:33px;width:14px;height:14px;background:#fdd985;border-radius:3px;border:1px solid #6b5a30"></div>
<svg class="abs" style="left:765px;top:37px" width="11" height="7" fill="none" stroke="#444" stroke-width="1.2"><path d="M1 1 L5.5 5.5 L10 1"/></svg>
<div class="abs" style="left:793px;top:24px;width:54px;height:32px;background:#f2f2f2;border-radius:5px"></div>
<div class="abs" style="left:801px;top:32px;font-size:13px;color:#333">1.0</div>
<svg class="abs" style="left:827px;top:37px" width="11" height="7" fill="none" stroke="#444" stroke-width="1.2"><path d="M1 1 L5.5 5.5 L10 1"/></svg>
<div class="abs" style="left:855px;top:24px;width:50px;height:32px;background:#f2f2f2;border-radius:5px"></div>
<div class="abs" style="left:863px;top:39px;width:14px;height:2px;background:#333"></div>
<svg class="abs" style="left:886px;top:37px" width="11" height="7" fill="none" stroke="#444" stroke-width="1.2"><path d="M1 1 L5.5 5.5 L10 1"/></svg>
<div class="abs" style="left:913px;top:24px;width:60px;height:32px;background:#f2f2f2;border-radius:5px"></div>
<div class="abs" style="left:921px;top:32px;font-size:13px;color:#333">80%</div>
<svg class="abs" style="left:952px;top:37px" width="11" height="7" fill="none" stroke="#444" stroke-width="1.2"><path d="M1 1 L5.5 5.5 L10 1"/></svg>
<div class="abs" style="left:981px;top:27px;width:54px;height:26px;background:#fde9b4;border-radius:5px"></div>
<svg class="abs" style="left:985px;top:32px" width="14" height="16" fill="none" stroke="#333" stroke-width="1.2"><path d="M1.5 1 H5 V9 A2 2 0 0 0 9 9 V1 H12.5 V9 A5.5 5.5 0 0 1 1.5 9 Z M1.5 4 H5 M9 4 H12.5"/></svg>
<div class="abs" style="left:1002px;top:32px;font-size:13px;color:#333;letter-spacing:-0.45px;-webkit-text-stroke:0.2px #333">Snap</div></div>
<div id="right"><div class="abs" style="left:-1px;top:0;width:1px;height:755px;background:#ececec"></div>
<div class="abs" style="left:8px;top:16px;width:117px;height:28px;background:#f2f2f2;border-radius:5px;"></div>
<svg class="abs" style="left:16px;top:24px" width="12" height="12"><circle cx="6" cy="6" r="6" fill="#444"/></svg>
<div class="abs" style="left:36px;top:22px;font-size:13px;line-height:16px;color:#333;white-space:nowrap;letter-spacing:-0.3px;letter-spacing:-0.6px">Ej påbörjad</div>
<svg class="abs" style="left:105px;top:26px" width="11" height="7" fill="none" stroke="#444" stroke-width="1.2"><path d="M1 1 L5.5 5.5 L10 1"/></svg>
<svg class="abs" style="left:146px;top:22px" width="17" height="15" fill="none" stroke="#333" stroke-width="1.2" stroke-linecap="round" stroke-linejoin="round"><rect x="1" y="1" width="15" height="5" rx="1"/><rect x="1" y="9" width="15" height="5" rx="1"/><path d="M8.5 5 V10 M6.5 8 L8.5 10 L10.5 8"/></svg>
<svg class="abs" style="left:177px;top:21px" width="16" height="17" fill="none" stroke="#333" stroke-width="1.2" stroke-linecap="round" stroke-linejoin="round"><rect x="1.5" y="7.5" width="13" height="8.5" rx="2"/><path d="M4 7.5 V5 A4 4 0 0 1 12 5 V7.5"/></svg>
<svg class="abs" style="left:207px;top:21px" width="21" height="17" fill="none" stroke="#333" stroke-width="1.2" stroke-linecap="round" stroke-linejoin="round"><path d="M1.5 8.5 C4 4 7 2.5 10.5 2.5 C14 2.5 17 4 19.5 8.5 C17 13 14 14.5 10.5 14.5 C7 14.5 4 13 1.5 8.5 Z"/><circle cx="10.5" cy="8.5" r="3"/><path d="M2 1 L19 16"/></svg>
<div class="abs" style="left:8px;top:52px;font-size:12.5px;line-height:15.5px;color:#333;white-space:nowrap;letter-spacing:-0.3px;-webkit-text-stroke:0.25px #333;letter-spacing:-0.4px">Mapp</div>
<div class="abs" style="left:8px;top:70px;width:224px;height:27.5px;background:#f2f2f2;border-radius:5px;"></div>
<div class="abs" style="left:24px;top:76px;font-size:12.5px;line-height:15.5px;color:#333;white-space:nowrap;letter-spacing:-0.3px;">Hus A &gt; Lägenhet 104</div>
<svg class="abs" style="left:204px;top:80px" width="11" height="7" fill="none" stroke="#444" stroke-width="1.2"><path d="M1 1 L5.5 5.5 L10 1"/></svg>
<div class="abs" style="left:8px;top:106px;font-size:12.5px;line-height:15.5px;color:#333;white-space:nowrap;letter-spacing:-0.3px;-webkit-text-stroke:0.25px #333;letter-spacing:-0.4px">Nr/Tag</div>
<div class="abs" style="left:54px;top:106px;font-size:12.5px;line-height:15.5px;color:#333;white-space:nowrap;letter-spacing:-0.3px;-webkit-text-stroke:0.25px #333;letter-spacing:-0.4px">Namn</div>
<div class="abs" style="left:8px;top:124.5px;width:37px;height:27.0px;background:#f2f2f2;border-radius:5px;"></div>
<div class="abs" style="left:16px;top:130px;font-size:12.5px;line-height:15.5px;color:#333;white-space:nowrap;letter-spacing:-0.3px;">003</div>
<div class="abs" style="left:54px;top:124.5px;width:178px;height:27.0px;background:#f2f2f2;border-radius:5px;"></div>
<div class="abs" style="left:70px;top:130px;font-size:12.5px;line-height:15.5px;color:#333;white-space:nowrap;letter-spacing:-0.3px;">Kök</div>
<svg class="abs" style="left:16px;top:172px" width="13" height="13" fill="none" stroke="#333" stroke-width="1"><path d="M2 2 H11 L8.5 6.5 L11 11 H2 Z"/><circle cx="2" cy="2" r="1.5" fill="#fff"/><circle cx="11" cy="2" r="1.5" fill="#fff"/><circle cx="8.5" cy="6.5" r="1.5" fill="#fff"/><circle cx="2" cy="11" r="1.5" fill="#fff"/><circle cx="11" cy="11" r="1.5" fill="#fff"/></svg>
<div class="abs" style="left:37px;top:171px;font-size:12.5px;line-height:15.5px;color:#333;white-space:nowrap;letter-spacing:-0.3px;-webkit-text-stroke:0.25px #333;letter-spacing:-0.4px">Area</div>
<svg class="abs" style="left:212px;top:175px" width="11" height="7" fill="none" stroke="#444" stroke-width="1.2"><path d="M1 1 L5.5 5.5 L10 1"/></svg>
<div class="abs" style="left:16px;top:190px;width:208px;height:1px;background:#e8e8e8"></div>
<div class="abs" style="left:8px;top:203px;font-size:12.5px;line-height:15.5px;color:#333;white-space:nowrap;letter-spacing:-0.3px;-webkit-text-stroke:0.25px #333;letter-spacing:-0.4px">Antal</div>
<div class="abs" style="left:124px;top:203px;font-size:12.5px;line-height:15.5px;color:#333;white-space:nowrap;letter-spacing:-0.3px;-webkit-text-stroke:0.25px #333;letter-spacing:-0.4px">Höjd</div>
<div class="abs" style="left:8px;top:221px;width:108px;height:27.5px;background:#f2f2f2;border-radius:5px;"></div>
<div class="abs" style="left:8px;top:221px;width:16px;height:27.5px;background:#cfcfcf;border-radius:5px 0 0 5px;font-size:12.5px;line-height:27px;text-align:center;color:#666">Q</div>
<div class="abs" style="left:124px;top:221px;width:108px;height:27.5px;background:#f2f2f2;border-radius:5px;"></div>
<div class="abs" style="left:124px;top:221px;width:16px;height:27.5px;background:#cfcfcf;border-radius:5px 0 0 5px;font-size:12.5px;line-height:27px;text-align:center;color:#666">Q</div>
<div class="abs" style="left:32px;top:227px;font-size:12.5px;line-height:15.5px;color:#333;white-space:nowrap;letter-spacing:-0.3px;">1</div>
<div class="abs" style="left:148px;top:227px;font-size:12.5px;line-height:15.5px;color:#333;white-space:nowrap;letter-spacing:-0.3px;">2,500</div>
<div class="abs" style="left:8px;top:257px;font-size:12.5px;line-height:15.5px;color:#333;white-space:nowrap;letter-spacing:-0.3px;-webkit-text-stroke:0.25px #333;letter-spacing:-0.4px">Fyllning</div>
<div class="abs" style="left:8px;top:275px;width:47.5px;height:27.5px;background:#f2f2f2;border-radius:5px;"></div>
<div class="abs" style="left:15px;top:283px;width:12px;height:12px;background:#a8ddd6;border:1px solid #666;border-radius:2.5px"></div>
<svg class="abs" style="left:36px;top:285px" width="11" height="7" fill="none" stroke="#444" stroke-width="1.2"><path d="M1 1 L5.5 5.5 L10 1"/></svg>
<div class="abs" style="left:60px;top:275px;width:55.5px;height:27.5px;background:#f2f2f2;border-radius:5px;"></div>
<div class="abs" style="left:68px;top:281px;font-size:12.5px;line-height:15.5px;color:#444;white-space:nowrap;letter-spacing:-0.3px;">60%</div>
<svg class="abs" style="left:98px;top:282px" width="10" height="14" fill="none" stroke="#555" stroke-width="1"><path d="M1.5 5.5 L5 1.5 L8.5 5.5 Z M1.5 8.5 L5 12.5 L8.5 8.5 Z"/><path d="M1 7 H9"/></svg>
<div class="abs" style="left:8px;top:311px;font-size:12.5px;line-height:15.5px;color:#333;white-space:nowrap;letter-spacing:-0.3px;-webkit-text-stroke:0.25px #333;letter-spacing:-0.4px">Kant</div>
<div class="abs" style="left:8px;top:329px;width:47.5px;height:27.5px;background:#f2f2f2;border-radius:5px;"></div>
<div class="abs" style="left:15px;top:337px;width:12px;height:12px;background:#fde9b4;border:1px solid #666;border-radius:2.5px"></div>
<svg class="abs" style="left:36px;top:339px" width="11" height="7" fill="none" stroke="#444" stroke-width="1.2"><path d="M1 1 L5.5 5.5 L10 1"/></svg>
<div class="abs" style="left:60px;top:329px;width:49.5px;height:27.5px;background:#f2f2f2;border-radius:5px;"></div>
<div class="abs" style="left:68px;top:335px;font-size:12.5px;line-height:15.5px;color:#444;white-space:nowrap;letter-spacing:-0.3px;">1.0</div>
<svg class="abs" style="left:92px;top:336px" width="10" height="14" fill="none" stroke="#555" stroke-width="1"><path d="M1.5 5.5 L5 1.5 L8.5 5.5 Z M1.5 8.5 L5 12.5 L8.5 8.5 Z"/><path d="M1 7 H9"/></svg>
<div class="abs" style="left:114px;top:329px;width:48.5px;height:27.5px;background:#f2f2f2;border-radius:5px;"></div>
<div class="abs" style="left:122px;top:342px;width:12px;height:2px;background:#333"></div>
<svg class="abs" style="left:143px;top:339px" width="11" height="7" fill="none" stroke="#444" stroke-width="1.2"><path d="M1 1 L5.5 5.5 L10 1"/></svg>
<div class="abs" style="left:167px;top:329px;width:56px;height:27.5px;background:#f2f2f2;border-radius:5px;"></div>
<div class="abs" style="left:175px;top:335px;font-size:12.5px;line-height:15.5px;color:#444;white-space:nowrap;letter-spacing:-0.3px;">80%</div>
<svg class="abs" style="left:205px;top:336px" width="10" height="14" fill="none" stroke="#555" stroke-width="1"><path d="M1.5 5.5 L5 1.5 L8.5 5.5 Z M1.5 8.5 L5 12.5 L8.5 8.5 Z"/><path d="M1 7 H9"/></svg>
<div class="abs" style="left:8px;top:365px;font-size:12.5px;line-height:15.5px;color:#333;white-space:nowrap;letter-spacing:-0.3px;-webkit-text-stroke:0.25px #333;letter-spacing:-0.4px">Avancerat</div>
<div class="abs" style="left:8px;top:383.5px;width:108px;height:27.0px;background:#b2e3dc;border-radius:4px;"></div>
<div class="abs" style="left:124px;top:383.5px;width:108px;height:27.0px;background:#b2e3dc;border-radius:4px;"></div>
<svg class="abs" style="left:34px;top:390px" width="14" height="14" fill="none" stroke="#333" stroke-width="1"><circle cx="2.3" cy="2.3" r="1.6"/><circle cx="7" cy="2.3" r="1.6"/><circle cx="11.7" cy="2.3" r="1.6"/><circle cx="2.3" cy="7" r="1.6"/><circle cx="7" cy="7" r="1.6"/><circle cx="11.7" cy="7" r="1.6"/><circle cx="2.3" cy="11.7" r="1.6"/><circle cx="7" cy="11.7" r="1.6"/><circle cx="11.7" cy="11.7" r="1.6"/></svg>
<div class="abs" style="left:52px;top:389px;font-size:13px;line-height:16px;color:#333;white-space:nowrap;letter-spacing:-0.3px;-webkit-text-stroke:0.25px #333;letter-spacing:-0.4px">Plattor</div>
<svg class="abs" style="left:149px;top:389px" width="15" height="15" fill="none" stroke="#333" stroke-width="1.1"><path d="M7 1 L1.5 14 H14 M7 1 L8.5 4 M9.5 6 L10.5 8 M11.5 10 L12.5 12"/></svg>
<div class="abs" style="left:168px;top:389px;font-size:13px;line-height:16px;color:#333;white-space:nowrap;letter-spacing:-0.3px;-webkit-text-stroke:0.25px #333;letter-spacing:-0.4px">Vinklar</div>
<svg class="abs" style="left:24px;top:424px" width="14" height="14" fill="none" stroke="#333" stroke-width="1"><circle cx="2.3" cy="2.3" r="1.6"/><circle cx="7" cy="2.3" r="1.6"/><circle cx="11.7" cy="2.3" r="1.6"/><circle cx="2.3" cy="7" r="1.6"/><circle cx="7" cy="7" r="1.6"/><circle cx="11.7" cy="7" r="1.6"/><circle cx="2.3" cy="11.7" r="1.6"/><circle cx="7" cy="11.7" r="1.6"/><circle cx="11.7" cy="11.7" r="1.6"/></svg>
<div class="abs" style="left:46px;top:423px;font-size:12.5px;line-height:15.5px;color:#333;white-space:nowrap;letter-spacing:-0.3px;letter-spacing:-0.5px">NV: 15x8 - 1x1x1</div>
<div class="abs" style="left:182px;top:423px;font-size:12.5px;line-height:15.5px;color:#333;white-space:nowrap;letter-spacing:-0.3px;text-decoration:underline">Rensa</div>
<svg class="abs" style="left:16px;top:463px" width="13" height="14" fill="none" stroke="#333" stroke-width="1"><rect x="0.5" y="0.5" width="12" height="13" rx="1.5"/><path d="M3 4 H10 M3 7 H10 M3 10 H6"/></svg>
<div class="abs" style="left:37px;top:462px;font-size:12.5px;line-height:15.5px;color:#333;white-space:nowrap;letter-spacing:-0.3px;-webkit-text-stroke:0.25px #333;letter-spacing:-0.4px">Bruttovärden</div>
<svg class="abs" style="left:212px;top:467px" width="11" height="7" fill="none" stroke="#444" stroke-width="1.2"><path d="M1 1 L5.5 5.5 L10 1"/></svg>
<div class="abs" style="left:16px;top:481px;width:208px;height:1px;background:#e8e8e8"></div>
<div class="abs" style="left:8px;top:488.5px;width:224px;height:26.5px;background:#f2f2f2;border-radius:5px;"></div>
<div class="abs" style="left:8px;top:488.5px;width:34px;height:26.5px;background:#cfcfcf;border-radius:5px 0 0 5px;font-size:11px;line-height:26px;text-align:center;color:#333"></div>
<div class="abs" style="left:46px;top:494.5px;font-size:12.5px;line-height:15.5px;color:#333;white-space:nowrap;letter-spacing:-0.3px;">Valda objekt</div>
<div class="abs" style="left:191px;top:490.5px;width:38px;height:22.5px;background:#fff;border-radius:6px;font-size:12.5px;line-height:22px;text-align:right;padding-right:3px;color:#333">1,000</div>
<div class="abs" style="left:8px;top:517.5px;width:224px;height:26.5px;background:#f2f2f2;border-radius:5px;"></div>
<div class="abs" style="left:8px;top:517.5px;width:34px;height:26.5px;background:#cfcfcf;border-radius:5px 0 0 5px;font-size:11px;line-height:26px;text-align:center;color:#333">A</div>
<div class="abs" style="left:46px;top:523.5px;font-size:12.5px;line-height:15.5px;color:#333;white-space:nowrap;letter-spacing:-0.3px;">Area (m2)</div>
<div class="abs" style="left:185px;top:519.5px;width:44px;height:22.5px;background:#fff;border-radius:6px;font-size:12.5px;line-height:22px;text-align:right;padding-right:3px;color:#333">12,342</div>
<div class="abs" style="left:8px;top:546.5px;width:224px;height:26.5px;background:#f2f2f2;border-radius:5px;"></div>
<div class="abs" style="left:8px;top:546.5px;width:34px;height:26.5px;background:#cfcfcf;border-radius:5px 0 0 5px;font-size:11px;line-height:26px;text-align:center;color:#333">L</div>
<div class="abs" style="left:46px;top:552.5px;font-size:12.5px;line-height:15.5px;color:#333;white-space:nowrap;letter-spacing:-0.3px;">Längd (m)</div>
<div class="abs" style="left:185px;top:548.5px;width:44px;height:22.5px;background:#fff;border-radius:6px;font-size:12.5px;line-height:22px;text-align:right;padding-right:3px;color:#333">16,374</div>
<div class="abs" style="left:8px;top:575.5px;width:224px;height:26.5px;background:#f2f2f2;border-radius:5px;"></div>
<div class="abs" style="left:8px;top:575.5px;width:34px;height:26.5px;background:#cfcfcf;border-radius:5px 0 0 5px;font-size:11px;line-height:26px;text-align:center;color:#333">V</div>
<div class="abs" style="left:46px;top:581.5px;font-size:12.5px;line-height:15.5px;color:#333;white-space:nowrap;letter-spacing:-0.3px;">Vägg (m2)</div>
<div class="abs" style="left:185px;top:577.5px;width:44px;height:22.5px;background:#fff;border-radius:6px;font-size:12.5px;line-height:22px;text-align:right;padding-right:3px;color:#333">40,935</div>
<div class="abs" style="left:8px;top:604.5px;width:224px;height:26.5px;background:#f2f2f2;border-radius:5px;"></div>
<div class="abs" style="left:8px;top:604.5px;width:34px;height:26.5px;background:#cfcfcf;border-radius:5px 0 0 5px;font-size:11px;line-height:26px;text-align:center;color:#333">VO</div>
<div class="abs" style="left:46px;top:610.5px;font-size:12.5px;line-height:15.5px;color:#333;white-space:nowrap;letter-spacing:-0.3px;">Volym (m3)</div>
<div class="abs" style="left:185px;top:606.5px;width:44px;height:22.5px;background:#fff;border-radius:6px;font-size:12.5px;line-height:22px;text-align:right;padding-right:3px;color:#333">30,855</div>
<div class="abs" style="left:8px;top:633.5px;width:224px;height:26.5px;background:#f2f2f2;border-radius:5px;"></div>
<div class="abs" style="left:8px;top:633.5px;width:34px;height:26.5px;background:#cfcfcf;border-radius:5px 0 0 5px;font-size:11px;line-height:26px;text-align:center;color:#333">P</div>
<div class="abs" style="left:46px;top:639.5px;font-size:12.5px;line-height:15.5px;color:#333;white-space:nowrap;letter-spacing:-0.3px;">Punkter (st)</div>
<div class="abs" style="left:191px;top:635.5px;width:38px;height:22.5px;background:#fff;border-radius:6px;font-size:12.5px;line-height:22px;text-align:right;padding-right:3px;color:#333">4,000</div>
<svg class="abs" style="left:16px;top:680px" width="13" height="14" fill="none" stroke="#333" stroke-width="1"><rect x="0.5" y="0.5" width="12" height="13" rx="1.5"/><path d="M3 4 H10 M3 7 H10 M3 10 H6"/></svg>
<div class="abs" style="left:37px;top:679px;font-size:12.5px;line-height:15.5px;color:#333;white-space:nowrap;letter-spacing:-0.3px;-webkit-text-stroke:0.25px #333;letter-spacing:-0.4px">Nettovärden</div>
<svg class="abs" style="left:212px;top:684px" width="11" height="7" fill="none" stroke="#444" stroke-width="1.2"><path d="M1 1 L5.5 5.5 L10 1"/></svg>
<div class="abs" style="left:16px;top:698px;width:208px;height:1px;background:#e8e8e8"></div>
<div class="abs" style="left:8px;top:705.5px;width:224px;height:26.5px;background:#f2f2f2;border-radius:5px;"></div>
<div class="abs" style="left:8px;top:705.5px;width:34px;height:26.5px;background:#cfcfcf;border-radius:5px 0 0 5px;font-size:11px;line-height:26px;text-align:center;color:#333">NA</div>
<div class="abs" style="left:46px;top:711.5px;font-size:12.5px;line-height:15.5px;color:#333;white-space:nowrap;letter-spacing:-0.3px;">Netto Area (m2)</div>
<div class="abs" style="left:185px;top:707.5px;width:44px;height:22.5px;background:#fff;border-radius:6px;font-size:12.5px;line-height:22px;text-align:right;padding-right:3px;color:#333">12.342</div>
<div class="abs" style="left:8px;top:734.5px;width:224px;height:26.5px;background:#f2f2f2;border-radius:5px;"></div>
<div class="abs" style="left:8px;top:734.5px;width:34px;height:26.5px;background:#cfcfcf;border-radius:5px 0 0 5px;font-size:11px;line-height:26px;text-align:center;color:#333">NL</div>
<div class="abs" style="left:46px;top:740.5px;font-size:12.5px;line-height:15.5px;color:#333;white-space:nowrap;letter-spacing:-0.3px;">Net Length (m)</div>
<div class="abs" style="left:185px;top:736.5px;width:44px;height:22.5px;background:#fff;border-radius:6px;font-size:12.5px;line-height:22px;text-align:right;padding-right:3px;color:#333">16,374</div></div>
<div id="bottom"><div class="abs" style="left:17px;top:12px;font-size:12.5px;line-height:16.5px;color:#333;white-space:nowrap;-webkit-text-stroke:0.25px #333;letter-spacing:-0.4px">Mallar:</div>
<svg class="abs" style="left:66px;top:13px" width="17" height="15" fill="none" stroke="#333" stroke-width="1.2" stroke-linecap="round" stroke-linejoin="round"><rect x="1" y="1" width="15" height="13" rx="1"/><path d="M1 4.5 H16 M4 7.5 H8 M4 10.5 H8 M9.5 9 H13.5 M9.5 11.5 H13.5"/></svg>
<div class="abs" style="left:86px;top:12px;font-size:13px;line-height:17px;color:#333;white-space:nowrap;-webkit-text-stroke:0.25px #333;letter-spacing:-0.4px">Importera</div>
<svg class="abs" style="left:155px;top:13px" width="15" height="15" fill="none" stroke="#333" stroke-width="1.2" stroke-linecap="round" stroke-linejoin="round"><path d="M1 1 H11 L14 4 V14 H1 Z"/><path d="M4 1 V5 H10 V1"/><circle cx="7.5" cy="10" r="1.8"/></svg>
<div class="abs" style="left:173px;top:12px;font-size:13px;line-height:17px;color:#333;white-space:nowrap;-webkit-text-stroke:0.25px #333;letter-spacing:-0.4px">Spara</div>
<div class="abs" style="left:216px;top:10px;width:1px;height:23px;background:#e6e6e6"></div>
<div class="abs" style="left:226px;top:6px;width:811px;height:31px;background:#f2f2f2;border-radius:5px"></div>
<div class="abs" style="left:242px;top:12px;font-size:14px;line-height:18px;color:#9a9a9a;white-space:nowrap;">Börja skriva för att lägga till rad, använd | för a dela upp kolumner</div>
<svg class="abs" style="left:1048px;top:13px" width="15" height="16" fill="none" stroke="#333" stroke-width="1.2" stroke-linecap="round" stroke-linejoin="round"><rect x="4.5" y="1" width="9.5" height="11" rx="1"/><path d="M4.5 4 H1.5 V15 H10 V12"/></svg>
<div class="abs" style="left:1067px;top:12px;font-size:13px;line-height:17px;color:#333;white-space:nowrap;-webkit-text-stroke:0.25px #333;letter-spacing:-0.4px">Kopiera</div>
<svg class="abs" style="left:1123px;top:12px" width="18" height="17" fill="none" stroke="#333" stroke-width="1.2" stroke-linecap="round" stroke-linejoin="round"><path d="M5 3 H2 V15 H7"/><rect x="4.5" y="1" width="5" height="3" rx="0.8"/><rect x="8" y="6.5" width="9" height="9.5" rx="1"/><path d="M9 3 H11 V6"/></svg>
<div class="abs" style="left:1144px;top:12px;font-size:13px;line-height:17px;color:#333;white-space:nowrap;-webkit-text-stroke:0.25px #333;letter-spacing:-0.4px">Klistra in</div>
<svg class="abs" style="left:1208px;top:14px" width="17" height="14" fill="none" stroke="#333" stroke-width="1.2" stroke-linecap="round" stroke-linejoin="round"><rect x="1" y="1" width="15" height="4.5" rx="1"/><rect x="1" y="8.5" width="15" height="4.5" rx="1"/><path d="M8.5 4.5 V9.5 M6.5 7.5 L8.5 9.5 L10.5 7.5"/></svg>
<div class="abs" style="left:1228px;top:12px;font-size:13px;line-height:17px;color:#333;white-space:nowrap;-webkit-text-stroke:0.25px #333;letter-spacing:-0.4px">Ersätt</div>
<svg class="abs" style="left:1276px;top:12px" width="15" height="17" fill="none" stroke="#333" stroke-width="1.2" stroke-linecap="round" stroke-linejoin="round"><path d="M1 3.5 H14 M5 3.5 V1.5 H10 V3.5 M2.5 3.5 L3.5 16 H11.5 L12.5 3.5"/></svg>
<div class="abs" style="left:1295px;top:12px;font-size:13px;line-height:17px;color:#333;white-space:nowrap;-webkit-text-stroke:0.25px #333;letter-spacing:-0.4px">Ta bort</div>
<div class="abs" style="left:1346px;top:10px;width:1px;height:23px;background:#e6e6e6"></div>
<svg class="abs" style="left:1359px;top:12px" width="15" height="17" fill="none" stroke="#333" stroke-width="1.2" stroke-linecap="round" stroke-linejoin="round"><path d="M13.5 3.5 V1 H1.5 L7.5 8.5 L1.5 16 H13.5 V13.5"/></svg>
<div class="abs" style="left:1376px;top:12px;font-size:13px;line-height:17px;color:#333;white-space:nowrap;-webkit-text-stroke:0.25px #333;letter-spacing:-0.4px">19 363 kr</div>
<svg class="abs" style="left:1442px;top:12px" width="17" height="17" fill="none" stroke="#333" stroke-width="1.2" stroke-linecap="round" stroke-linejoin="round"><circle cx="8.5" cy="8.5" r="7.5"/><path d="M8.5 4 V8.5 L11.5 11.5"/></svg>
<div class="abs" style="left:1463px;top:12px;font-size:13px;line-height:17px;color:#333;white-space:nowrap;-webkit-text-stroke:0.25px #333;letter-spacing:-0.4px">21h 31m</div>
<svg class="abs" style="left:1513px;top:18px" width="10" height="6" fill="none" stroke="#555" stroke-width="1"><path d="M1 1 L5 5 L9 1"/></svg>
<div class="abs" style="left:1px;top:41px;width:1543px;height:40px;background:#f2f2f2"></div>
<div class="abs" style="left:1px;top:81px;width:1543px;height:40px;background:#fde9b4"></div>
<div class="abs" style="left:1px;top:40px;width:1543px;height:2px;background:#e2e2e2"></div>
<div class="abs" style="left:1px;top:80px;width:1543px;height:2px;background:#e2e2e2"></div>
<div class="abs" style="left:1px;top:120px;width:1543px;height:2px;background:#e2e2e2"></div>
<div class="abs" style="left:1px;top:160px;width:1543px;height:2px;background:#e2e2e2"></div>
<div class="abs" style="left:1px;top:200px;width:1543px;height:2px;background:#e2e2e2"></div>
<div class="abs" style="left:0.5px;top:41px;width:2px;height:200px;background:#e2e2e2"></div>
<div class="abs" style="left:39.60000000000002px;top:41px;width:2px;height:200px;background:#e2e2e2"></div>
<div class="abs" style="left:87.39999999999998px;top:41px;width:2px;height:200px;background:#e2e2e2"></div>
<div class="abs" style="left:211.79999999999995px;top:41px;width:2px;height:200px;background:#e2e2e2"></div>
<div class="abs" style="left:336px;top:41px;width:2px;height:200px;background:#e2e2e2"></div>
<div class="abs" style="left:526.7px;top:41px;width:2px;height:200px;background:#e2e2e2"></div>
<div class="abs" style="left:716.4000000000001px;top:41px;width:2px;height:200px;background:#e2e2e2"></div>
<div class="abs" style="left:906.4000000000001px;top:41px;width:2px;height:200px;background:#e2e2e2"></div>
<div class="abs" style="left:1014px;top:41px;width:2px;height:200px;background:#e2e2e2"></div>
<div class="abs" style="left:1101.7px;top:41px;width:2px;height:200px;background:#e2e2e2"></div>
<div class="abs" style="left:1206.2px;top:41px;width:2px;height:200px;background:#e2e2e2"></div>
<div class="abs" style="left:1310px;top:41px;width:2px;height:200px;background:#e2e2e2"></div>
<div class="abs" style="left:1426px;top:41px;width:2px;height:200px;background:#e2e2e2"></div>
<div class="abs" style="left:14px;top:55px;width:13px;height:13px;border:1.2px solid #555;border-radius:2px;background:#fff"></div>
<svg class="abs" style="left:48.60000000000002px;top:53px" width="10" height="16" fill="none" stroke="#555" stroke-width="1.1" stroke-linejoin="round"><path d="M1.5 6 L5 2 L8.5 6 M1.5 10 L5 14 L8.5 10"/><path d="M1.5 8 H8.5"/></svg>
<svg class="abs" style="left:66.69999999999999px;top:54px" width="14" height="14" fill="none" stroke="#555" stroke-width="1.1" stroke-linejoin="round"><path d="M1 1.5 H13 L8.5 7 V12.5 L5.5 11 V7 Z"/></svg>
<div class="abs" style="left:97px;top:52px;font-size:14px;line-height:18px;color:#333;white-space:nowrap;">Yrke</div>
<svg class="abs" style="left:172.70000000000005px;top:53px" width="10" height="16" fill="none" stroke="#555" stroke-width="1.1" stroke-linejoin="round"><path d="M1.5 6 L5 2 L8.5 6 M1.5 10 L5 14 L8.5 10"/><path d="M1.5 8 H8.5"/></svg>
<svg class="abs" style="left:191px;top:54px" width="14" height="14" fill="none" stroke="#555" stroke-width="1.1" stroke-linejoin="round"><path d="M1 1.5 H13 L8.5 7 V12.5 L5.5 11 V7 Z"/></svg>
<div class="abs" style="left:221px;top:52px;font-size:14px;line-height:18px;color:#333;white-space:nowrap;">Etapp</div>
<svg class="abs" style="left:296px;top:53px" width="10" height="16" fill="none" stroke="#555" stroke-width="1.1" stroke-linejoin="round"><path d="M1.5 6 L5 2 L8.5 6 M1.5 10 L5 14 L8.5 10"/><path d="M1.5 8 H8.5"/></svg>
<svg class="abs" style="left:315px;top:54px" width="14" height="14" fill="none" stroke="#555" stroke-width="1.1" stroke-linejoin="round"><path d="M1 1.5 H13 L8.5 7 V12.5 L5.5 11 V7 Z"/></svg>
<div class="abs" style="left:345px;top:52px;font-size:14px;line-height:18px;color:#333;white-space:nowrap;">Byggdel</div>
<svg class="abs" style="left:486px;top:53px" width="10" height="16" fill="none" stroke="#555" stroke-width="1.1" stroke-linejoin="round"><path d="M1.5 6 L5 2 L8.5 6 M1.5 10 L5 14 L8.5 10"/><path d="M1.5 8 H8.5"/></svg>
<svg class="abs" style="left:504px;top:54px" width="14" height="14" fill="none" stroke="#555" stroke-width="1.1" stroke-linejoin="round"><path d="M1 1.5 H13 L8.5 7 V12.5 L5.5 11 V7 Z"/></svg>
<div class="abs" style="left:535.5px;top:52px;font-size:14px;line-height:18px;color:#333;white-space:nowrap;">Arbete</div>
<svg class="abs" style="left:677.4000000000001px;top:53px" width="10" height="16" fill="none" stroke="#555" stroke-width="1.1" stroke-linejoin="round"><path d="M1.5 6 L5 2 L8.5 6 M1.5 10 L5 14 L8.5 10"/><path d="M1.5 8 H8.5"/></svg>
<svg class="abs" style="left:695px;top:54px" width="14" height="14" fill="none" stroke="#555" stroke-width="1.1" stroke-linejoin="round"><path d="M1 1.5 H13 L8.5 7 V12.5 L5.5 11 V7 Z"/></svg>
<div class="abs" style="left:725px;top:52px;font-size:14px;line-height:18px;color:#333;white-space:nowrap;">Material</div>
<svg class="abs" style="left:867.4000000000001px;top:53px" width="10" height="16" fill="none" stroke="#555" stroke-width="1.1" stroke-linejoin="round"><path d="M1.5 6 L5 2 L8.5 6 M1.5 10 L5 14 L8.5 10"/><path d="M1.5 8 H8.5"/></svg>
<svg class="abs" style="left:885px;top:54px" width="14" height="14" fill="none" stroke="#555" stroke-width="1.1" stroke-linejoin="round"><path d="M1 1.5 H13 L8.5 7 V12.5 L5.5 11 V7 Z"/></svg>
<div class="abs" style="left:915px;top:52px;font-size:14px;line-height:18px;color:#333;white-space:nowrap;">Mängd</div>
<svg class="abs" style="left:997px;top:53px" width="10" height="16" fill="none" stroke="#555" stroke-width="1.1" stroke-linejoin="round"><path d="M1.5 6 L5 2 L8.5 6 M1.5 10 L5 14 L8.5 10"/><path d="M1.5 8 H8.5"/></svg>
<div class="abs" style="left:1023px;top:52px;font-size:14px;line-height:18px;color:#333;white-space:nowrap;">Enh</div>
<svg class="abs" style="left:1063.3px;top:53px" width="10" height="16" fill="none" stroke="#555" stroke-width="1.1" stroke-linejoin="round"><path d="M1.5 6 L5 2 L8.5 6 M1.5 10 L5 14 L8.5 10"/><path d="M1.5 8 H8.5"/></svg>
<svg class="abs" style="left:1081px;top:54px" width="14" height="14" fill="none" stroke="#555" stroke-width="1.1" stroke-linejoin="round"><path d="M1 1.5 H13 L8.5 7 V12.5 L5.5 11 V7 Z"/></svg>
<div class="abs" style="left:1111px;top:52px;font-size:14px;line-height:18px;color:#333;white-space:nowrap;">Pris/Enh</div>
<svg class="abs" style="left:1189px;top:53px" width="10" height="16" fill="none" stroke="#555" stroke-width="1.1" stroke-linejoin="round"><path d="M1.5 6 L5 2 L8.5 6 M1.5 10 L5 14 L8.5 10"/><path d="M1.5 8 H8.5"/></svg>
<div class="abs" style="left:1215px;top:52px;font-size:14px;line-height:18px;color:#333;white-space:nowrap;">Tid/Enh</div>
<svg class="abs" style="left:1293px;top:53px" width="10" height="16" fill="none" stroke="#555" stroke-width="1.1" stroke-linejoin="round"><path d="M1.5 6 L5 2 L8.5 6 M1.5 10 L5 14 L8.5 10"/><path d="M1.5 8 H8.5"/></svg>
<div class="abs" style="left:1319px;top:52px;font-size:14px;line-height:18px;color:#333;white-space:nowrap;">Pris</div>
<svg class="abs" style="left:1409px;top:53px" width="10" height="16" fill="none" stroke="#555" stroke-width="1.1" stroke-linejoin="round"><path d="M1.5 6 L5 2 L8.5 6 M1.5 10 L5 14 L8.5 10"/><path d="M1.5 8 H8.5"/></svg>
<div class="abs" style="left:1435px;top:52px;font-size:14px;line-height:18px;color:#333;white-space:nowrap;">Tid</div>
<svg class="abs" style="left:1525px;top:53px" width="10" height="16" fill="none" stroke="#555" stroke-width="1.1" stroke-linejoin="round"><path d="M1.5 6 L5 2 L8.5 6 M1.5 10 L5 14 L8.5 10"/><path d="M1.5 8 H8.5"/></svg>
<svg class="abs" style="left:14px;top:94px" width="13" height="13"><rect x="0" y="0" width="13" height="13" rx="2" fill="#12a082"/><path d="M3 6.5 L5.5 9 L10 4" fill="none" stroke="#fff" stroke-width="1.5"/></svg>
<svg class="abs" style="left:47px;top:94px" width="14" height="14"><circle cx="7" cy="7" r="7" fill="#2a2d31"/></svg>
<svg class="abs" style="left:70px;top:98px" width="11" height="7" fill="none" stroke="#444" stroke-width="1.1"><path d="M1 1 L5.5 5.5 L10 1"/></svg>
<div class="abs" style="left:97px;top:92px;font-size:14px;line-height:18px;color:#333;white-space:nowrap;">Snickare</div>
<div class="abs" style="left:221px;top:92px;font-size:14px;line-height:18px;color:#333;white-space:nowrap;">Interiör</div>
<div class="abs" style="left:345px;top:92px;font-size:14px;line-height:18px;color:#333;white-space:nowrap;">Innervägg</div>
<div class="abs" style="left:535.5px;top:92px;font-size:14px;line-height:18px;color:#333;white-space:nowrap;">Regling, gipsning</div>
<div class="abs" style="left:725px;top:92px;font-size:14px;line-height:18px;color:#333;white-space:nowrap;">Gyproc 2400x600x13</div>
<div class="abs" style="left:1023px;top:92px;font-size:14px;line-height:18px;color:#333;white-space:nowrap;">m2</div>
<div class="abs" style="left:856.75px;top:92px;width:150px;text-align:right;font-size:14px;line-height:18px;color:#333;white-space:nowrap">40,935</div>
<div class="abs" style="left:1049px;top:92px;width:150px;text-align:right;font-size:14px;line-height:18px;color:#333;white-space:nowrap">149,00 kr</div>
<div class="abs" style="left:1153px;top:92px;width:150px;text-align:right;font-size:14px;line-height:18px;color:#333;white-space:nowrap">00:06</div>
<div class="abs" style="left:1269px;top:92px;width:150px;text-align:right;font-size:14px;line-height:18px;color:#333;white-space:nowrap">6 099 kr</div>
<div class="abs" style="left:1384px;top:92px;width:150px;text-align:right;font-size:14px;line-height:18px;color:#333;white-space:nowrap">04:09</div>
<div class="abs" style="left:14px;top:135px;width:13px;height:13px;border:1.2px solid #555;border-radius:2px;background:#fff"></div>
<svg class="abs" style="left:47px;top:134px" width="14" height="14"><circle cx="7" cy="7" r="7" fill="#2a2d31"/></svg>
<svg class="abs" style="left:70px;top:138px" width="11" height="7" fill="none" stroke="#444" stroke-width="1.1"><path d="M1 1 L5.5 5.5 L10 1"/></svg>
<div class="abs" style="left:97px;top:132px;font-size:14px;line-height:18px;color:#333;white-space:nowrap;">Snickare</div>
<div class="abs" style="left:221px;top:132px;font-size:14px;line-height:18px;color:#333;white-space:nowrap;">Interiör</div>
<div class="abs" style="left:345px;top:132px;font-size:14px;line-height:18px;color:#333;white-space:nowrap;">Innervägg</div>
<div class="abs" style="left:535.5px;top:132px;font-size:14px;line-height:18px;color:#333;white-space:nowrap;">Kortling</div>
<div class="abs" style="left:725px;top:132px;font-size:14px;line-height:18px;color:#333;white-space:nowrap;">OSB 2400x600x14</div>
<div class="abs" style="left:1023px;top:132px;font-size:14px;line-height:18px;color:#333;white-space:nowrap;">m2</div>
<div class="abs" style="left:856.75px;top:132px;width:150px;text-align:right;font-size:14px;line-height:18px;color:#333;white-space:nowrap">40,935</div>
<div class="abs" style="left:1049px;top:132px;width:150px;text-align:right;font-size:14px;line-height:18px;color:#333;white-space:nowrap">149,00 kr</div>
<div class="abs" style="left:1153px;top:132px;width:150px;text-align:right;font-size:14px;line-height:18px;color:#333;white-space:nowrap">00:09</div>
<div class="abs" style="left:1269px;top:132px;width:150px;text-align:right;font-size:14px;line-height:18px;color:#333;white-space:nowrap">6 099 kr</div>
<div class="abs" style="left:1384px;top:132px;width:150px;text-align:right;font-size:14px;line-height:18px;color:#333;white-space:nowrap">04:09</div>
<div class="abs" style="left:14px;top:175px;width:13px;height:13px;border:1.2px solid #555;border-radius:2px;background:#fff"></div>
<svg class="abs" style="left:47px;top:174px" width="14" height="14"><circle cx="7" cy="7" r="7" fill="#2a2d31"/></svg>
<svg class="abs" style="left:70px;top:178px" width="11" height="7" fill="none" stroke="#444" stroke-width="1.1"><path d="M1 1 L5.5 5.5 L10 1"/></svg>
<div class="abs" style="left:97px;top:172px;font-size:14px;line-height:18px;color:#333;white-space:nowrap;">Golvläggare</div>
<div class="abs" style="left:221px;top:172px;font-size:14px;line-height:18px;color:#333;white-space:nowrap;">Interior</div>
<div class="abs" style="left:345px;top:172px;font-size:14px;line-height:18px;color:#333;white-space:nowrap;">Golv</div>
<div class="abs" style="left:535.5px;top:172px;font-size:14px;line-height:18px;color:#333;white-space:nowrap;">Läggning, parkett</div>
<div class="abs" style="left:725px;top:172px;font-size:14px;line-height:18px;color:#333;white-space:nowrap;">Kährs 3-stav ek 13mm</div>
<div class="abs" style="left:1023px;top:172px;font-size:14px;line-height:18px;color:#333;white-space:nowrap;">m2</div>
<div class="abs" style="left:856.75px;top:172px;width:150px;text-align:right;font-size:14px;line-height:18px;color:#333;white-space:nowrap">12,342</div>
<div class="abs" style="left:1049px;top:172px;width:150px;text-align:right;font-size:14px;line-height:18px;color:#333;white-space:nowrap">489,00 kr</div>
<div class="abs" style="left:1153px;top:172px;width:150px;text-align:right;font-size:14px;line-height:18px;color:#333;white-space:nowrap">00:12</div>
<div class="abs" style="left:1269px;top:172px;width:150px;text-align:right;font-size:14px;line-height:18px;color:#333;white-space:nowrap">6 035 kr</div>
<div class="abs" style="left:1384px;top:172px;width:150px;text-align:right;font-size:14px;line-height:18px;color:#333;white-space:nowrap">12:21</div>
<div class="abs" style="left:14px;top:215px;width:13px;height:13px;border:1.2px solid #555;border-radius:2px;background:#fff"></div>
<svg class="abs" style="left:47px;top:214px" width="14" height="14"><circle cx="7" cy="7" r="7" fill="#2a2d31"/></svg>
<svg class="abs" style="left:70px;top:218px" width="11" height="7" fill="none" stroke="#444" stroke-width="1.1"><path d="M1 1 L5.5 5.5 L10 1"/></svg>
<div class="abs" style="left:97px;top:212px;font-size:14px;line-height:18px;color:#333;white-space:nowrap;">Snickare</div>
<div class="abs" style="left:221px;top:212px;font-size:14px;line-height:18px;color:#333;white-space:nowrap;">Interior</div>
<div class="abs" style="left:345px;top:212px;font-size:14px;line-height:18px;color:#333;white-space:nowrap;">Seckel</div>
<div class="abs" style="left:535.5px;top:212px;font-size:14px;line-height:18px;color:#333;white-space:nowrap;">Mont. sockel</div>
<div class="abs" style="left:725px;top:212px;font-size:14px;line-height:18px;color:#333;white-space:nowrap;">Furu FM 56mm</div>
<div class="abs" style="left:1023px;top:212px;font-size:14px;line-height:18px;color:#333;white-space:nowrap;">m</div>
<div class="abs" style="left:856.75px;top:212px;width:150px;text-align:right;font-size:14px;line-height:18px;color:#333;white-space:nowrap">16,374</div>
<div class="abs" style="left:1049px;top:212px;width:150px;text-align:right;font-size:14px;line-height:18px;color:#333;white-space:nowrap">69,00 kr</div>
<div class="abs" style="left:1153px;top:212px;width:150px;text-align:right;font-size:14px;line-height:18px;color:#333;white-space:nowrap">00:07</div>
<div class="abs" style="left:1269px;top:212px;width:150px;text-align:right;font-size:14px;line-height:18px;color:#333;white-space:nowrap">1 130 kr</div>
<div class="abs" style="left:1384px;top:212px;width:150px;text-align:right;font-size:14px;line-height:18px;color:#333;white-space:nowrap">01:52</div></div>
<div id="status">Rukkor AB &gt; Bygg &gt; (001) Kv Skatan 69, Ystad &gt; A-ritningar &gt; 101-0001.pdf &nbsp;|&nbsp; Anbudskalkyl &gt; Hus A &gt; Lägenhet 104 &gt; 003 Kök</div>
</body></html>
